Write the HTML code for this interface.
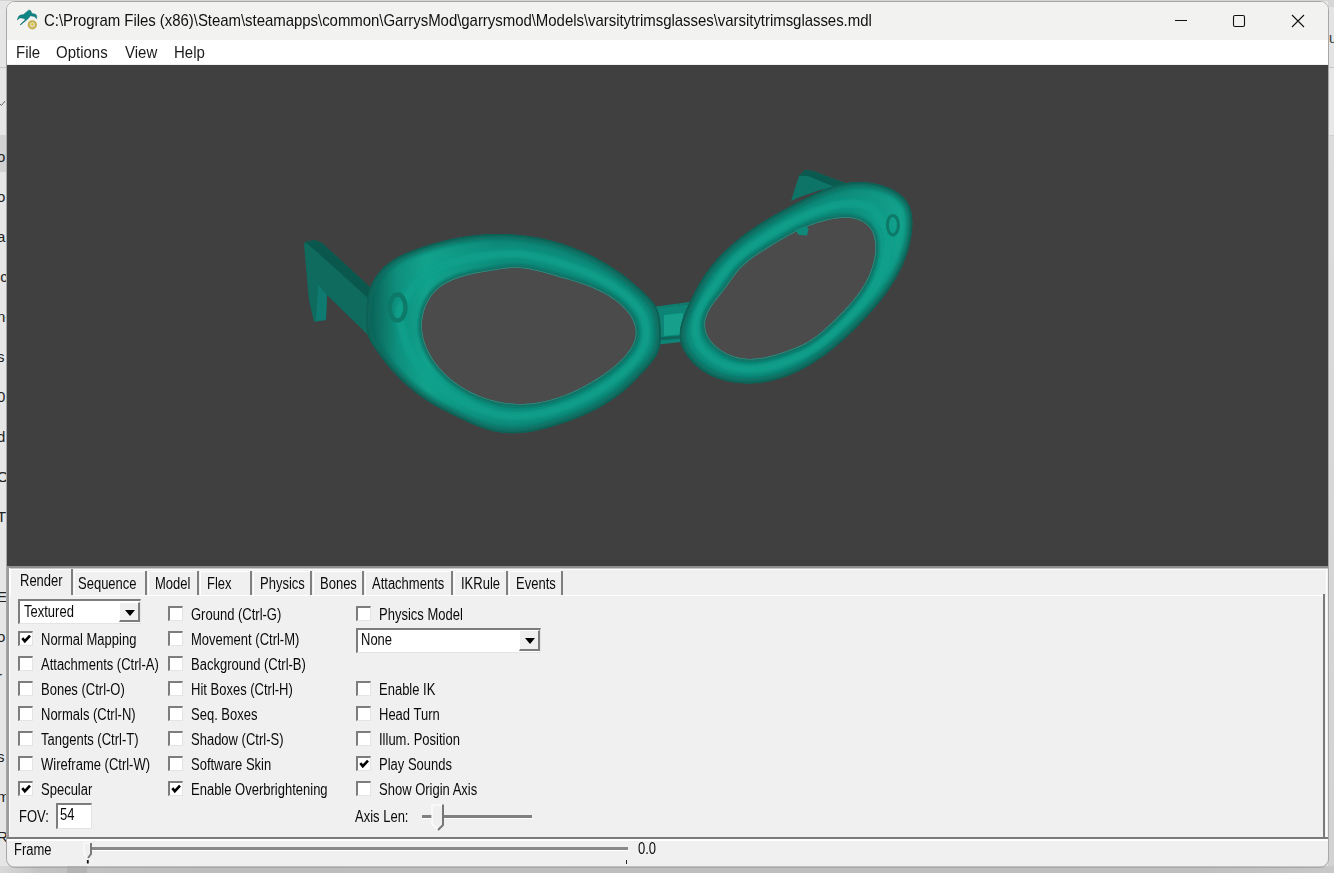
<!DOCTYPE html>
<html><head><meta charset="utf-8">
<style>
*{margin:0;padding:0;box-sizing:border-box}
html,body{width:1334px;height:873px;overflow:hidden;font-family:"Liberation Sans",sans-serif;position:relative}
.abs{position:absolute}
#bg{position:absolute;left:0;top:0;width:1334px;height:873px;background:#e6e6e6}
#win{position:absolute;left:0;top:0;width:1334px;height:873px;clip-path:inset(2px 6px 7px 7px round 8px);background:#f0f0f0}
#winborder{position:absolute;left:6px;top:1px;width:1323px;height:867px;border-radius:9px;border:1px solid #a8a8a8}
#title{position:absolute;left:0;top:0;width:1334px;height:40px;background:#f2f2f0}
#ttext{position:absolute;left:44px;top:13px;transform:scaleY(1.08);transform-origin:0 12.7px;font-size:15px;line-height:15px;color:#111;white-space:nowrap;letter-spacing:-0.05px}
#menu{position:absolute;left:0;top:40px;width:1334px;height:24px;background:#fff}
#menu span{position:absolute;top:45px;font-size:15px;line-height:15px;color:#111;transform:scaleY(1.08);transform-origin:0 13px}
#view{position:absolute;left:0;top:65px;width:1334px;height:501px;background:#404040}
.lbl{position:absolute;font-size:13px;line-height:13px;color:#0a0a0a;white-space:nowrap;transform:scaleY(1.28);transform-origin:0 11px}
.cb{position:absolute;width:15px;height:15px;background:#fff;border-top:2px solid #7d7d7d;border-left:2px solid #7d7d7d;border-right:1px solid #e4e4e4;border-bottom:1px solid #e4e4e4}
.cb .chk{position:absolute;left:-2px;top:-2px}
.tab{position:absolute;top:570px;height:26px;border-top:1px solid #fff;border-left:1px solid #fff;border-right:2px solid #8a8a8a;background:#f0f0f0}
.tab.sel{top:568px;height:28px}
.frag{position:absolute;left:-3px;font-size:15px;line-height:15px;color:#222;width:10px;overflow:hidden;white-space:nowrap}
.sunk{position:absolute;background:#fff;border-top:2px solid #7d7d7d;border-left:2px solid #7d7d7d;border-right:1px solid #e4e4e4;border-bottom:1px solid #e4e4e4}
.dd{position:absolute;width:21px;background:#f0f0f0;border-top:1px solid #fff;border-left:1px solid #fff;border-right:2px solid #7d7d7d;border-bottom:2px solid #7d7d7d}
.dd:after{content:"";position:absolute;left:4.5px;top:7px;border-left:5px solid transparent;border-right:5px solid transparent;border-top:6px solid #000}
</style></head><body>
<div id="bg"></div>
<div style="position:absolute;left:0;top:0;width:1334px;height:1px;background:#d4d4d4"></div>
<div style="position:absolute;left:1328px;top:0;width:6px;height:873px;background:linear-gradient(180deg,#d6d6d6 0,#d6d6d6 7px,#e4e4e4 7px,#e4e4e4 67px,#c8c8c8 67px,#c8c8c8 68px,#e8e8e8 68px,#e8e8e8 135px,#cfcfcf 135px,#cfcfcf 136px,#dcdcdc 136px,#d2d2d2 873px)"></div>
<div style="position:absolute;left:0;top:67px;width:7px;height:1px;background:#c8c8c8"></div>
<div style="position:absolute;left:1328px;top:67px;width:6px;height:1px;background:#c8c8c8"></div>
<div style="position:absolute;left:0;top:135px;width:7px;height:37px;background:#d2d2d2"></div>
<svg style="position:absolute;left:0;top:97px" width="7" height="10"><path d="M0,7 L1.5,8.5 L5,4" stroke="#666" stroke-width="1" fill="none"/></svg>
<div style="position:absolute;left:0;top:866px;width:1334px;height:7px;background:linear-gradient(90deg,#d8d8d8 0,#c2c2c2 40px,#bdbdbd 200px,#bfbfbf 1200px,#c8c8c8 1334px)"></div>
<div style="position:absolute;left:67px;top:866px;width:20px;height:7px;background:#b3b3b3"></div>
<div class="frag" style="top:149px">o</div>
<div class="frag" style="top:189px">o</div>
<div class="frag" style="top:229px">a</div>
<div class="frag" style="top:269px">lc</div>
<div class="frag" style="top:309px">n-</div>
<div class="frag" style="top:349px">s</div>
<div class="frag" style="top:389px">02</div>
<div class="frag" style="top:429px">d</div>
<div class="frag" style="top:469px">O</div>
<div class="frag" style="top:509px">TE</div>
<div class="frag" style="top:589px">E</div>
<div class="frag" style="top:629px">o</div>
<div class="frag" style="top:669px">r</div>
<div class="frag" style="top:749px">s</div>
<div class="frag" style="top:789px">m</div>
<div class="frag" style="top:829px">RE</div>
<div style="position:absolute;left:1329px;top:31px;font-size:14px;line-height:14px;color:#333">u</div>
<div id="winborder"></div>
<div id="win">
  <div id="title"></div>
  <svg class="abs" style="left:16px;top:9px" width="24" height="24" viewBox="0 0 24 24">
    <path d="M1.3,11.1 C2,8.5 3,6.8 4,6.3 L7.6,5.6 L12.6,1.2 L14.5,1.5 L15.9,4.5 L19.4,5.3 C20.5,6 21,7 20.5,9.7 C19.5,8 18.5,7.3 17.2,7.2 L14.5,6.7 L11.7,10 L5.1,15.5 L4,15.8 L9.5,10.5 L7.6,9.4 C6,8.8 4,8.9 3.5,8.9 Z" fill="#0f8584" stroke="#0d7272" stroke-width="0.6" stroke-linejoin="round"/>
    <circle cx="16.3" cy="15.8" r="4.6" fill="#c3ac4a"/>
    <circle cx="16.3" cy="15.8" r="2.8" fill="#ddd5a8"/>
    <circle cx="16.3" cy="15.2" r="1" fill="#e8c420"/>
  </svg>
  <div id="ttext">C:\Program Files (x86)\Steam\steamapps\common\GarrysMod\garrysmod\Models\varsitytrimsglasses\varsitytrimsglasses.mdl</div>
  <svg class="abs" style="left:1160px;top:0" width="168" height="40" viewBox="1160 0 168 40">
    <path d="M1175 20.5 H1187" stroke="#111" stroke-width="1.1"/>
    <rect x="1233.5" y="15.5" width="11" height="11" rx="1.5" fill="none" stroke="#111" stroke-width="1.1"/>
    <path d="M1292 15 L1304 27 M1304 15 L1292 27" stroke="#111" stroke-width="1.1"/>
  </svg>
  <div id="menu"></div>
  <div id="menuitems">
    <div class="lbl" style="left:16px;top:45px;font-size:15px;line-height:15px;color:#1a1a1a;transform:scaleY(1.08);transform-origin:0 13px">File</div>
    <div class="lbl" style="left:56px;top:45px;font-size:15px;line-height:15px;color:#1a1a1a;transform:scaleY(1.08);transform-origin:0 13px">Options</div>
    <div class="lbl" style="left:125px;top:45px;font-size:15px;line-height:15px;color:#1a1a1a;transform:scaleY(1.08);transform-origin:0 13px">View</div>
    <div class="lbl" style="left:174px;top:45px;font-size:15px;line-height:15px;color:#1a1a1a;transform:scaleY(1.08);transform-origin:0 13px">Help</div>
  </div>
  <div id="view"></div>
  <svg class="abs" style="left:0;top:0" width="1334" height="873" viewBox="0 0 1334 873"><defs><filter id="b3" x="-50%" y="-50%" width="200%" height="200%"><feGaussianBlur stdDeviation="2.5"/></filter><filter id="b2" x="-50%" y="-50%" width="200%" height="200%"><feGaussianBlur stdDeviation="1.5"/></filter><filter id="b1" x="-50%" y="-50%" width="200%" height="200%"><feGaussianBlur stdDeviation="0.6"/></filter><clipPath id="cL"><path d="M366.5,321.2 L366.4,317.9 L366.4,314.6 L366.4,311.3 L366.6,308.1 L366.8,304.9 L367.1,301.7 L367.5,298.5 L368.1,295.4 L368.9,292.3 L369.8,289.3 L370.8,286.2 L372.1,283.3 L373.6,280.4 L375.3,277.5 L377.3,274.7 L379.4,272.0 L381.6,269.5 L383.9,267.1 L386.4,264.9 L388.9,262.9 L391.5,261.1 L394.2,259.3 L396.9,257.7 L399.7,256.2 L402.5,254.8 L405.4,253.5 L408.4,252.2 L411.3,251.1 L414.3,249.9 L417.3,248.8 L420.4,247.7 L423.4,246.7 L426.5,245.7 L429.6,244.7 L432.7,243.8 L435.8,242.9 L438.9,242.0 L442.1,241.2 L445.2,240.4 L448.4,239.7 L451.6,239.0 L454.8,238.4 L458.0,237.8 L461.2,237.2 L464.5,236.7 L467.7,236.2 L470.9,235.8 L474.2,235.4 L477.4,235.1 L480.7,234.8 L483.9,234.5 L487.2,234.3 L490.4,234.2 L493.7,234.1 L496.9,234.0 L500.2,234.0 L503.4,234.1 L506.7,234.1 L509.9,234.3 L513.2,234.5 L516.4,234.7 L519.6,235.0 L522.8,235.4 L526.0,235.7 L529.2,236.2 L532.4,236.7 L535.6,237.2 L538.8,237.8 L541.9,238.4 L545.1,239.1 L548.2,239.9 L551.3,240.7 L554.4,241.5 L557.5,242.4 L560.6,243.3 L563.7,244.3 L566.7,245.3 L569.8,246.4 L572.8,247.5 L575.8,248.7 L578.8,249.9 L581.8,251.1 L584.7,252.4 L587.7,253.8 L590.6,255.2 L593.5,256.6 L596.3,258.1 L599.2,259.7 L602.0,261.3 L604.8,262.9 L607.6,264.6 L610.4,266.3 L613.1,268.1 L615.8,269.9 L618.5,271.7 L621.2,273.6 L623.8,275.6 L626.4,277.6 L629.0,279.6 L631.5,281.7 L634.0,283.7 L636.5,285.9 L638.9,288.0 L641.3,290.2 L643.7,292.5 L646.0,294.7 L648.3,297.0 L650.5,299.3 L652.5,301.7 L654.4,304.2 L656.1,306.8 L657.4,309.7 L658.5,312.7 L659.3,315.9 L659.8,319.2 L660.2,322.5 L660.5,325.9 L660.7,329.3 L660.9,332.6 L660.9,335.9 L660.8,339.1 L660.5,342.3 L660.0,345.4 L659.3,348.4 L658.3,351.3 L657.0,354.2 L655.4,356.9 L653.6,359.6 L651.6,362.2 L649.5,364.8 L647.3,367.3 L645.1,369.8 L642.9,372.2 L640.7,374.6 L638.4,377.0 L636.1,379.4 L633.8,381.7 L631.5,383.9 L629.1,386.2 L626.7,388.3 L624.3,390.4 L621.8,392.5 L619.3,394.5 L616.7,396.4 L614.1,398.3 L611.5,400.1 L608.8,401.9 L606.1,403.6 L603.4,405.3 L600.6,406.9 L597.8,408.4 L594.9,409.9 L592.0,411.3 L589.1,412.7 L586.2,414.1 L583.2,415.4 L580.2,416.7 L577.2,417.9 L574.2,419.1 L571.1,420.2 L568.0,421.4 L564.9,422.4 L561.8,423.5 L558.7,424.5 L555.5,425.5 L552.4,426.5 L549.2,427.4 L546.1,428.2 L542.9,429.1 L539.7,429.8 L536.5,430.5 L533.3,431.2 L530.1,431.7 L526.9,432.2 L523.7,432.6 L520.5,432.9 L517.3,433.1 L514.1,433.2 L510.9,433.2 L507.8,433.1 L504.6,432.9 L501.4,432.6 L498.3,432.1 L495.2,431.6 L492.0,430.9 L488.9,430.0 L485.8,429.1 L482.7,428.1 L479.7,427.0 L476.6,425.8 L473.6,424.5 L470.5,423.2 L467.5,421.9 L464.5,420.5 L461.6,419.1 L458.6,417.6 L455.6,416.2 L452.7,414.7 L449.8,413.3 L446.9,411.8 L444.0,410.3 L441.1,408.9 L438.3,407.3 L435.5,405.8 L432.7,404.2 L430.0,402.5 L427.3,400.8 L424.6,399.0 L421.9,397.2 L419.3,395.3 L416.7,393.4 L414.2,391.4 L411.7,389.3 L409.2,387.3 L406.8,385.1 L404.4,382.9 L402.0,380.7 L399.7,378.4 L397.4,376.1 L395.2,373.8 L393.0,371.4 L390.8,368.9 L388.7,366.4 L386.6,363.9 L384.6,361.4 L382.6,358.8 L380.6,356.2 L378.7,353.6 L376.8,351.0 L375.0,348.3 L373.2,345.6 L371.5,342.9 L370.0,340.1 L368.7,337.2 L367.8,334.2 L367.2,331.0 L366.8,327.8 L366.6,324.5 L366.5,321.2Z M422.0,321.5 L422.3,319.2 L422.6,316.9 L423.1,314.6 L423.6,312.3 L424.3,310.0 L425.1,307.8 L425.9,305.6 L426.9,303.4 L428.0,301.3 L429.1,299.3 L430.4,297.3 L431.7,295.4 L433.2,293.6 L434.7,291.9 L436.3,290.3 L438.0,288.7 L439.8,287.3 L441.6,286.0 L443.5,284.7 L445.5,283.5 L447.5,282.4 L449.6,281.4 L451.7,280.4 L453.8,279.5 L456.0,278.7 L458.1,277.9 L460.3,277.2 L462.5,276.5 L464.8,275.9 L467.0,275.3 L469.2,274.8 L471.5,274.2 L473.7,273.8 L476.0,273.3 L478.2,272.9 L480.5,272.5 L482.8,272.1 L485.1,271.7 L487.3,271.3 L489.6,270.9 L491.9,270.6 L494.2,270.2 L496.5,269.8 L498.7,269.5 L501.0,269.1 L503.3,268.8 L505.5,268.5 L507.8,268.2 L510.1,268.0 L512.4,267.9 L514.6,267.8 L516.9,267.9 L519.2,268.0 L521.5,268.1 L523.8,268.4 L526.1,268.7 L528.3,269.0 L530.6,269.4 L532.9,269.9 L535.2,270.4 L537.5,270.9 L539.7,271.5 L542.0,272.1 L544.2,272.7 L546.5,273.3 L548.7,274.0 L551.0,274.6 L553.2,275.3 L555.4,275.9 L557.6,276.5 L559.8,277.2 L562.0,277.8 L564.2,278.4 L566.4,279.0 L568.5,279.6 L570.7,280.3 L572.8,280.9 L575.0,281.6 L577.1,282.2 L579.2,282.9 L581.4,283.6 L583.5,284.4 L585.6,285.1 L587.7,285.9 L589.8,286.7 L591.9,287.6 L594.0,288.5 L596.1,289.4 L598.2,290.4 L600.3,291.4 L602.4,292.5 L604.5,293.6 L606.6,294.8 L608.7,296.1 L610.7,297.4 L612.7,298.7 L614.7,300.1 L616.7,301.6 L618.6,303.1 L620.5,304.6 L622.2,306.2 L623.9,307.9 L625.6,309.6 L627.1,311.4 L628.5,313.2 L629.9,315.0 L631.1,316.9 L632.2,318.9 L633.1,320.9 L633.9,322.9 L634.6,325.0 L635.1,327.2 L635.5,329.3 L635.7,331.5 L635.7,333.7 L635.5,335.9 L635.2,338.1 L634.6,340.3 L633.8,342.3 L632.9,344.4 L631.9,346.4 L630.7,348.4 L629.4,350.3 L628.0,352.1 L626.6,353.9 L625.1,355.7 L623.6,357.4 L622.0,359.1 L620.4,360.8 L618.7,362.4 L617.0,363.9 L615.3,365.4 L613.5,366.9 L611.7,368.4 L609.9,369.8 L608.0,371.2 L606.1,372.6 L604.2,373.9 L602.3,375.2 L600.3,376.5 L598.4,377.8 L596.4,379.1 L594.4,380.3 L592.4,381.5 L590.4,382.7 L588.4,383.8 L586.3,385.0 L584.3,386.1 L582.2,387.2 L580.2,388.2 L578.1,389.3 L576.0,390.3 L573.9,391.3 L571.8,392.2 L569.7,393.1 L567.5,394.0 L565.4,394.9 L563.2,395.7 L561.1,396.5 L558.9,397.2 L556.7,397.9 L554.6,398.6 L552.4,399.3 L550.2,399.9 L548.0,400.4 L545.7,401.0 L543.5,401.4 L541.3,401.9 L539.1,402.3 L536.8,402.7 L534.6,403.0 L532.3,403.3 L530.1,403.5 L527.8,403.7 L525.6,403.8 L523.3,403.9 L521.0,404.0 L518.7,403.9 L516.5,403.9 L514.2,403.8 L511.9,403.6 L509.6,403.4 L507.3,403.2 L505.0,402.9 L502.8,402.5 L500.5,402.1 L498.2,401.7 L496.0,401.2 L493.7,400.6 L491.5,400.0 L489.2,399.4 L487.0,398.7 L484.8,398.0 L482.6,397.2 L480.4,396.4 L478.2,395.5 L476.1,394.6 L474.0,393.6 L471.8,392.6 L469.8,391.6 L467.7,390.5 L465.7,389.4 L463.7,388.2 L461.7,387.0 L459.7,385.7 L457.8,384.4 L455.9,383.1 L454.0,381.7 L452.2,380.2 L450.4,378.8 L448.6,377.3 L446.9,375.7 L445.2,374.1 L443.6,372.5 L442.0,370.8 L440.4,369.1 L438.9,367.4 L437.4,365.6 L436.0,363.7 L434.6,361.9 L433.3,360.0 L432.0,358.1 L430.8,356.1 L429.7,354.1 L428.6,352.1 L427.6,350.0 L426.7,348.0 L425.8,345.9 L425.0,343.8 L424.3,341.6 L423.7,339.4 L423.1,337.3 L422.7,335.0 L422.3,332.8 L422.1,330.6 L421.9,328.3 L421.8,326.0 L421.9,323.8 L422.0,321.5Z" clip-rule="evenodd"/></clipPath><clipPath id="cR"><path d="M687.9,306.2 L689.1,303.6 L690.3,301.0 L691.5,298.5 L692.8,295.9 L694.0,293.4 L695.3,290.9 L696.6,288.4 L698.0,286.0 L699.4,283.6 L700.8,281.2 L702.3,278.9 L703.8,276.5 L705.3,274.3 L706.9,272.0 L708.5,269.8 L710.1,267.6 L711.8,265.4 L713.6,263.3 L715.4,261.2 L717.2,259.1 L719.1,257.1 L721.0,255.1 L722.9,253.1 L724.9,251.2 L726.9,249.2 L728.9,247.4 L731.0,245.5 L733.0,243.7 L735.2,241.9 L737.3,240.1 L739.5,238.4 L741.7,236.6 L743.9,234.9 L746.1,233.3 L748.4,231.6 L750.7,230.0 L753.0,228.4 L755.3,226.9 L757.6,225.3 L760.0,223.8 L762.3,222.3 L764.7,220.8 L767.1,219.4 L769.5,217.9 L771.9,216.5 L774.3,215.1 L776.7,213.7 L779.1,212.4 L781.6,211.0 L784.0,209.7 L786.4,208.4 L788.9,207.1 L791.4,205.8 L793.8,204.5 L796.3,203.2 L798.8,201.9 L801.2,200.6 L803.7,199.4 L806.2,198.1 L808.7,196.9 L811.1,195.6 L813.6,194.4 L816.1,193.2 L818.6,192.0 L821.1,190.9 L823.7,189.8 L826.2,188.8 L828.8,187.8 L831.4,186.9 L834.0,186.0 L836.6,185.2 L839.3,184.5 L842.0,183.9 L844.7,183.4 L847.5,182.9 L850.3,182.6 L853.1,182.3 L855.9,182.2 L858.7,182.1 L861.5,182.1 L864.4,182.2 L867.2,182.5 L870.0,182.8 L872.8,183.2 L875.6,183.7 L878.4,184.4 L881.1,185.1 L883.8,186.0 L886.5,186.9 L889.2,188.0 L891.8,189.2 L894.3,190.5 L896.7,191.9 L899.0,193.5 L901.1,195.2 L903.1,197.0 L904.9,198.9 L906.6,201.0 L908.0,203.2 L909.2,205.5 L910.1,208.0 L910.9,210.5 L911.5,213.2 L911.9,215.9 L912.2,218.7 L912.3,221.5 L912.3,224.4 L912.2,227.2 L912.0,230.1 L911.7,232.9 L911.3,235.7 L910.8,238.5 L910.3,241.3 L909.7,244.0 L909.0,246.8 L908.3,249.5 L907.5,252.1 L906.6,254.8 L905.6,257.4 L904.6,260.0 L903.6,262.6 L902.5,265.2 L901.3,267.7 L900.1,270.2 L898.9,272.6 L897.6,275.1 L896.2,277.5 L894.8,279.9 L893.4,282.3 L891.9,284.6 L890.4,286.9 L888.9,289.2 L887.3,291.5 L885.7,293.7 L884.0,296.0 L882.3,298.2 L880.6,300.4 L878.9,302.5 L877.1,304.7 L875.3,306.8 L873.5,308.9 L871.7,311.0 L869.9,313.1 L868.0,315.2 L866.1,317.3 L864.2,319.3 L862.3,321.3 L860.4,323.3 L858.5,325.3 L856.5,327.3 L854.6,329.3 L852.6,331.2 L850.6,333.1 L848.6,335.0 L846.6,336.9 L844.5,338.8 L842.5,340.7 L840.4,342.5 L838.3,344.3 L836.2,346.1 L834.1,347.9 L831.9,349.6 L829.7,351.3 L827.5,353.0 L825.3,354.7 L823.0,356.3 L820.7,357.9 L818.4,359.5 L816.1,361.0 L813.8,362.5 L811.4,364.0 L809.0,365.4 L806.6,366.8 L804.1,368.2 L801.7,369.4 L799.2,370.7 L796.7,371.9 L794.2,373.0 L791.6,374.2 L789.1,375.2 L786.5,376.2 L783.9,377.1 L781.2,378.0 L778.6,378.8 L775.9,379.6 L773.3,380.3 L770.6,380.9 L767.8,381.5 L765.1,382.0 L762.3,382.4 L759.6,382.8 L756.8,383.0 L754.0,383.2 L751.1,383.4 L748.3,383.4 L745.5,383.4 L742.7,383.3 L739.9,383.1 L737.1,382.9 L734.3,382.5 L731.5,382.1 L728.8,381.6 L726.1,380.9 L723.4,380.2 L720.7,379.5 L718.1,378.6 L715.5,377.6 L713.0,376.5 L710.5,375.4 L708.0,374.1 L705.6,372.7 L703.3,371.3 L701.0,369.7 L698.8,368.0 L696.6,366.3 L694.6,364.4 L692.6,362.4 L690.7,360.3 L688.8,358.1 L687.1,355.8 L685.6,353.5 L684.1,351.1 L682.9,348.6 L681.8,346.0 L681.0,343.5 L680.3,340.9 L679.9,338.2 L679.8,335.6 L679.8,332.9 L680.0,330.3 L680.4,327.6 L681.0,324.9 L681.7,322.2 L682.5,319.5 L683.5,316.8 L684.5,314.2 L685.6,311.5 L686.7,308.8 L687.9,306.2Z M705.2,321.5 L705.5,319.7 L706.0,317.8 L706.6,316.0 L707.2,314.2 L708.0,312.4 L708.9,310.7 L709.9,308.9 L710.9,307.2 L712.0,305.5 L713.2,303.8 L714.4,302.1 L715.7,300.5 L717.0,298.8 L718.3,297.2 L719.6,295.5 L720.9,293.9 L722.2,292.2 L723.4,290.6 L724.7,288.9 L725.9,287.3 L727.1,285.7 L728.3,284.0 L729.4,282.4 L730.5,280.8 L731.7,279.2 L732.8,277.6 L734.0,276.0 L735.2,274.5 L736.3,272.9 L737.6,271.4 L738.8,270.0 L740.1,268.6 L741.5,267.2 L742.9,265.8 L744.3,264.5 L745.8,263.2 L747.3,261.9 L748.8,260.7 L750.4,259.5 L752.0,258.3 L753.6,257.1 L755.3,256.0 L757.0,254.8 L758.6,253.7 L760.3,252.6 L762.0,251.5 L763.8,250.5 L765.5,249.4 L767.2,248.3 L768.9,247.2 L770.6,246.2 L772.3,245.1 L774.0,244.1 L775.8,243.0 L777.5,242.0 L779.2,241.0 L780.9,240.0 L782.6,239.0 L784.4,238.0 L786.1,237.0 L787.8,236.0 L789.6,235.1 L791.3,234.1 L793.1,233.2 L794.8,232.3 L796.6,231.4 L798.4,230.6 L800.2,229.7 L802.0,228.9 L803.8,228.1 L805.6,227.3 L807.4,226.6 L809.2,225.8 L811.1,225.1 L813.0,224.4 L814.8,223.8 L816.7,223.1 L818.6,222.5 L820.5,221.9 L822.4,221.4 L824.4,220.9 L826.3,220.4 L828.3,219.9 L830.3,219.5 L832.3,219.1 L834.3,218.8 L836.4,218.4 L838.4,218.2 L840.5,218.0 L842.5,217.8 L844.6,217.8 L846.6,217.8 L848.6,217.9 L850.7,218.0 L852.7,218.3 L854.6,218.8 L856.6,219.3 L858.5,219.9 L860.4,220.7 L862.1,221.6 L863.9,222.6 L865.5,223.7 L867.0,224.9 L868.3,226.2 L869.6,227.6 L870.7,229.1 L871.6,230.6 L872.5,232.3 L873.2,234.0 L873.8,235.8 L874.3,237.7 L874.7,239.6 L875.0,241.5 L875.2,243.5 L875.4,245.5 L875.4,247.6 L875.3,249.6 L875.2,251.7 L875.0,253.8 L874.7,255.8 L874.4,257.9 L874.0,259.9 L873.5,262.0 L873.0,264.0 L872.4,265.9 L871.8,267.9 L871.2,269.8 L870.5,271.7 L869.8,273.5 L869.0,275.4 L868.2,277.2 L867.3,279.0 L866.4,280.8 L865.5,282.5 L864.5,284.2 L863.5,285.9 L862.5,287.6 L861.4,289.3 L860.3,290.9 L859.2,292.5 L858.0,294.1 L856.8,295.7 L855.6,297.3 L854.4,298.8 L853.1,300.4 L851.8,301.9 L850.5,303.4 L849.2,304.9 L847.9,306.4 L846.5,307.8 L845.2,309.3 L843.8,310.8 L842.4,312.2 L841.0,313.6 L839.6,315.1 L838.2,316.5 L836.7,317.9 L835.3,319.3 L833.9,320.7 L832.4,322.1 L831.0,323.5 L829.5,324.8 L828.0,326.2 L826.6,327.6 L825.1,328.9 L823.6,330.2 L822.1,331.5 L820.6,332.8 L819.0,334.0 L817.4,335.2 L815.9,336.4 L814.3,337.6 L812.7,338.7 L811.0,339.8 L809.4,340.9 L807.7,341.9 L806.0,342.8 L804.2,343.8 L802.4,344.7 L800.7,345.5 L798.8,346.3 L797.0,347.1 L795.1,347.9 L793.3,348.6 L791.4,349.3 L789.5,350.0 L787.6,350.7 L785.7,351.4 L783.8,352.0 L781.8,352.7 L779.9,353.3 L778.0,353.9 L776.0,354.5 L774.1,355.1 L772.2,355.6 L770.2,356.1 L768.3,356.6 L766.3,357.0 L764.4,357.4 L762.4,357.8 L760.4,358.1 L758.5,358.3 L756.5,358.6 L754.6,358.7 L752.6,358.8 L750.7,358.9 L748.7,358.9 L746.8,358.8 L744.8,358.6 L742.9,358.4 L741.0,358.1 L739.0,357.8 L737.1,357.3 L735.2,356.8 L733.3,356.2 L731.4,355.5 L729.5,354.7 L727.6,353.9 L725.7,352.9 L723.9,351.9 L722.2,350.9 L720.4,349.7 L718.7,348.5 L717.1,347.2 L715.5,345.9 L714.0,344.5 L712.6,343.0 L711.3,341.5 L710.1,339.9 L709.0,338.2 L708.0,336.5 L707.1,334.8 L706.4,333.0 L705.9,331.1 L705.4,329.2 L705.2,327.3 L705.0,325.4 L705.1,323.4 L705.2,321.5Z" clip-rule="evenodd"/></clipPath><linearGradient id="gL" x1="368" y1="0" x2="660" y2="0" gradientUnits="userSpaceOnUse"><stop offset="0" stop-color="#0a5f54"/><stop offset="0.1" stop-color="#0f8f7e"/><stop offset="0.2" stop-color="#12a38d"/><stop offset="0.45" stop-color="#0e8a7a"/><stop offset="1" stop-color="#0e8878"/></linearGradient><linearGradient id="gR" x1="680" y1="0" x2="912" y2="0" gradientUnits="userSpaceOnUse"><stop offset="0" stop-color="#0e8a7a"/><stop offset="0.7" stop-color="#0e8a7a"/><stop offset="1" stop-color="#13a690"/></linearGradient></defs><path d="M791.0,201.0 L799.0,176.0 L805.0,170.0 L813.0,171.0 L849.0,184.5 L820.0,190.0 L800.0,197.0Z" fill="#0d7467"/><path d="M799,176 L805,170 L813,171 L849,184.5 L835,187 L808,176Z" fill="#0a5a50"/><path d="M305.0,242.0 L315.0,240.0 L322.0,243.0 L371.0,288.0 L369.0,336.0 L327.0,295.0 L326.0,320.0 L314.0,322.0 L309.0,300.0 L304.0,245.0Z" fill="#0e6b5e"/><path d="M305.0,242.0 L315.0,240.0 L322.0,243.0 L371.0,288.0 L369.0,299.0 L317.0,252.0Z" fill="#0a574d"/><path d="M318.0,285.0 L327.0,295.0 L326.0,320.0 L316.0,321.0Z" fill="#0f7a70"/><path d="M422.0,321.5 L422.3,319.2 L422.6,316.9 L423.1,314.6 L423.6,312.3 L424.3,310.0 L425.1,307.8 L425.9,305.6 L426.9,303.4 L428.0,301.3 L429.1,299.3 L430.4,297.3 L431.7,295.4 L433.2,293.6 L434.7,291.9 L436.3,290.3 L438.0,288.7 L439.8,287.3 L441.6,286.0 L443.5,284.7 L445.5,283.5 L447.5,282.4 L449.6,281.4 L451.7,280.4 L453.8,279.5 L456.0,278.7 L458.1,277.9 L460.3,277.2 L462.5,276.5 L464.8,275.9 L467.0,275.3 L469.2,274.8 L471.5,274.2 L473.7,273.8 L476.0,273.3 L478.2,272.9 L480.5,272.5 L482.8,272.1 L485.1,271.7 L487.3,271.3 L489.6,270.9 L491.9,270.6 L494.2,270.2 L496.5,269.8 L498.7,269.5 L501.0,269.1 L503.3,268.8 L505.5,268.5 L507.8,268.2 L510.1,268.0 L512.4,267.9 L514.6,267.8 L516.9,267.9 L519.2,268.0 L521.5,268.1 L523.8,268.4 L526.1,268.7 L528.3,269.0 L530.6,269.4 L532.9,269.9 L535.2,270.4 L537.5,270.9 L539.7,271.5 L542.0,272.1 L544.2,272.7 L546.5,273.3 L548.7,274.0 L551.0,274.6 L553.2,275.3 L555.4,275.9 L557.6,276.5 L559.8,277.2 L562.0,277.8 L564.2,278.4 L566.4,279.0 L568.5,279.6 L570.7,280.3 L572.8,280.9 L575.0,281.6 L577.1,282.2 L579.2,282.9 L581.4,283.6 L583.5,284.4 L585.6,285.1 L587.7,285.9 L589.8,286.7 L591.9,287.6 L594.0,288.5 L596.1,289.4 L598.2,290.4 L600.3,291.4 L602.4,292.5 L604.5,293.6 L606.6,294.8 L608.7,296.1 L610.7,297.4 L612.7,298.7 L614.7,300.1 L616.7,301.6 L618.6,303.1 L620.5,304.6 L622.2,306.2 L623.9,307.9 L625.6,309.6 L627.1,311.4 L628.5,313.2 L629.9,315.0 L631.1,316.9 L632.2,318.9 L633.1,320.9 L633.9,322.9 L634.6,325.0 L635.1,327.2 L635.5,329.3 L635.7,331.5 L635.7,333.7 L635.5,335.9 L635.2,338.1 L634.6,340.3 L633.8,342.3 L632.9,344.4 L631.9,346.4 L630.7,348.4 L629.4,350.3 L628.0,352.1 L626.6,353.9 L625.1,355.7 L623.6,357.4 L622.0,359.1 L620.4,360.8 L618.7,362.4 L617.0,363.9 L615.3,365.4 L613.5,366.9 L611.7,368.4 L609.9,369.8 L608.0,371.2 L606.1,372.6 L604.2,373.9 L602.3,375.2 L600.3,376.5 L598.4,377.8 L596.4,379.1 L594.4,380.3 L592.4,381.5 L590.4,382.7 L588.4,383.8 L586.3,385.0 L584.3,386.1 L582.2,387.2 L580.2,388.2 L578.1,389.3 L576.0,390.3 L573.9,391.3 L571.8,392.2 L569.7,393.1 L567.5,394.0 L565.4,394.9 L563.2,395.7 L561.1,396.5 L558.9,397.2 L556.7,397.9 L554.6,398.6 L552.4,399.3 L550.2,399.9 L548.0,400.4 L545.7,401.0 L543.5,401.4 L541.3,401.9 L539.1,402.3 L536.8,402.7 L534.6,403.0 L532.3,403.3 L530.1,403.5 L527.8,403.7 L525.6,403.8 L523.3,403.9 L521.0,404.0 L518.7,403.9 L516.5,403.9 L514.2,403.8 L511.9,403.6 L509.6,403.4 L507.3,403.2 L505.0,402.9 L502.8,402.5 L500.5,402.1 L498.2,401.7 L496.0,401.2 L493.7,400.6 L491.5,400.0 L489.2,399.4 L487.0,398.7 L484.8,398.0 L482.6,397.2 L480.4,396.4 L478.2,395.5 L476.1,394.6 L474.0,393.6 L471.8,392.6 L469.8,391.6 L467.7,390.5 L465.7,389.4 L463.7,388.2 L461.7,387.0 L459.7,385.7 L457.8,384.4 L455.9,383.1 L454.0,381.7 L452.2,380.2 L450.4,378.8 L448.6,377.3 L446.9,375.7 L445.2,374.1 L443.6,372.5 L442.0,370.8 L440.4,369.1 L438.9,367.4 L437.4,365.6 L436.0,363.7 L434.6,361.9 L433.3,360.0 L432.0,358.1 L430.8,356.1 L429.7,354.1 L428.6,352.1 L427.6,350.0 L426.7,348.0 L425.8,345.9 L425.0,343.8 L424.3,341.6 L423.7,339.4 L423.1,337.3 L422.7,335.0 L422.3,332.8 L422.1,330.6 L421.9,328.3 L421.8,326.0 L421.9,323.8 L422.0,321.5Z" fill="#4b4b4b"/><path d="M705.2,321.5 L705.5,319.7 L706.0,317.8 L706.6,316.0 L707.2,314.2 L708.0,312.4 L708.9,310.7 L709.9,308.9 L710.9,307.2 L712.0,305.5 L713.2,303.8 L714.4,302.1 L715.7,300.5 L717.0,298.8 L718.3,297.2 L719.6,295.5 L720.9,293.9 L722.2,292.2 L723.4,290.6 L724.7,288.9 L725.9,287.3 L727.1,285.7 L728.3,284.0 L729.4,282.4 L730.5,280.8 L731.7,279.2 L732.8,277.6 L734.0,276.0 L735.2,274.5 L736.3,272.9 L737.6,271.4 L738.8,270.0 L740.1,268.6 L741.5,267.2 L742.9,265.8 L744.3,264.5 L745.8,263.2 L747.3,261.9 L748.8,260.7 L750.4,259.5 L752.0,258.3 L753.6,257.1 L755.3,256.0 L757.0,254.8 L758.6,253.7 L760.3,252.6 L762.0,251.5 L763.8,250.5 L765.5,249.4 L767.2,248.3 L768.9,247.2 L770.6,246.2 L772.3,245.1 L774.0,244.1 L775.8,243.0 L777.5,242.0 L779.2,241.0 L780.9,240.0 L782.6,239.0 L784.4,238.0 L786.1,237.0 L787.8,236.0 L789.6,235.1 L791.3,234.1 L793.1,233.2 L794.8,232.3 L796.6,231.4 L798.4,230.6 L800.2,229.7 L802.0,228.9 L803.8,228.1 L805.6,227.3 L807.4,226.6 L809.2,225.8 L811.1,225.1 L813.0,224.4 L814.8,223.8 L816.7,223.1 L818.6,222.5 L820.5,221.9 L822.4,221.4 L824.4,220.9 L826.3,220.4 L828.3,219.9 L830.3,219.5 L832.3,219.1 L834.3,218.8 L836.4,218.4 L838.4,218.2 L840.5,218.0 L842.5,217.8 L844.6,217.8 L846.6,217.8 L848.6,217.9 L850.7,218.0 L852.7,218.3 L854.6,218.8 L856.6,219.3 L858.5,219.9 L860.4,220.7 L862.1,221.6 L863.9,222.6 L865.5,223.7 L867.0,224.9 L868.3,226.2 L869.6,227.6 L870.7,229.1 L871.6,230.6 L872.5,232.3 L873.2,234.0 L873.8,235.8 L874.3,237.7 L874.7,239.6 L875.0,241.5 L875.2,243.5 L875.4,245.5 L875.4,247.6 L875.3,249.6 L875.2,251.7 L875.0,253.8 L874.7,255.8 L874.4,257.9 L874.0,259.9 L873.5,262.0 L873.0,264.0 L872.4,265.9 L871.8,267.9 L871.2,269.8 L870.5,271.7 L869.8,273.5 L869.0,275.4 L868.2,277.2 L867.3,279.0 L866.4,280.8 L865.5,282.5 L864.5,284.2 L863.5,285.9 L862.5,287.6 L861.4,289.3 L860.3,290.9 L859.2,292.5 L858.0,294.1 L856.8,295.7 L855.6,297.3 L854.4,298.8 L853.1,300.4 L851.8,301.9 L850.5,303.4 L849.2,304.9 L847.9,306.4 L846.5,307.8 L845.2,309.3 L843.8,310.8 L842.4,312.2 L841.0,313.6 L839.6,315.1 L838.2,316.5 L836.7,317.9 L835.3,319.3 L833.9,320.7 L832.4,322.1 L831.0,323.5 L829.5,324.8 L828.0,326.2 L826.6,327.6 L825.1,328.9 L823.6,330.2 L822.1,331.5 L820.6,332.8 L819.0,334.0 L817.4,335.2 L815.9,336.4 L814.3,337.6 L812.7,338.7 L811.0,339.8 L809.4,340.9 L807.7,341.9 L806.0,342.8 L804.2,343.8 L802.4,344.7 L800.7,345.5 L798.8,346.3 L797.0,347.1 L795.1,347.9 L793.3,348.6 L791.4,349.3 L789.5,350.0 L787.6,350.7 L785.7,351.4 L783.8,352.0 L781.8,352.7 L779.9,353.3 L778.0,353.9 L776.0,354.5 L774.1,355.1 L772.2,355.6 L770.2,356.1 L768.3,356.6 L766.3,357.0 L764.4,357.4 L762.4,357.8 L760.4,358.1 L758.5,358.3 L756.5,358.6 L754.6,358.7 L752.6,358.8 L750.7,358.9 L748.7,358.9 L746.8,358.8 L744.8,358.6 L742.9,358.4 L741.0,358.1 L739.0,357.8 L737.1,357.3 L735.2,356.8 L733.3,356.2 L731.4,355.5 L729.5,354.7 L727.6,353.9 L725.7,352.9 L723.9,351.9 L722.2,350.9 L720.4,349.7 L718.7,348.5 L717.1,347.2 L715.5,345.9 L714.0,344.5 L712.6,343.0 L711.3,341.5 L710.1,339.9 L709.0,338.2 L708.0,336.5 L707.1,334.8 L706.4,333.0 L705.9,331.1 L705.4,329.2 L705.2,327.3 L705.0,325.4 L705.1,323.4 L705.2,321.5Z" fill="#4b4b4b"/><g><path d="M648,309 L690,304 L694,341 L681,342 L658,344.5 L648,345Z" fill="#0e8476"/><path d="M664,315 L683,313 L683,334 L664,336Z" fill="#12a08b" filter="url(#b1)"/><path d="M656,339 L690,336.5" stroke="#0b665a" stroke-width="3" filter="url(#b1)"/><path d="M656,307.5 L690,303" stroke="#0e7d6f" stroke-width="2" filter="url(#b1)"/></g><g clip-path="url(#cL)"><path d="M366.5,321.2 L366.4,317.9 L366.4,314.6 L366.4,311.3 L366.6,308.1 L366.8,304.9 L367.1,301.7 L367.5,298.5 L368.1,295.4 L368.9,292.3 L369.8,289.3 L370.8,286.2 L372.1,283.3 L373.6,280.4 L375.3,277.5 L377.3,274.7 L379.4,272.0 L381.6,269.5 L383.9,267.1 L386.4,264.9 L388.9,262.9 L391.5,261.1 L394.2,259.3 L396.9,257.7 L399.7,256.2 L402.5,254.8 L405.4,253.5 L408.4,252.2 L411.3,251.1 L414.3,249.9 L417.3,248.8 L420.4,247.7 L423.4,246.7 L426.5,245.7 L429.6,244.7 L432.7,243.8 L435.8,242.9 L438.9,242.0 L442.1,241.2 L445.2,240.4 L448.4,239.7 L451.6,239.0 L454.8,238.4 L458.0,237.8 L461.2,237.2 L464.5,236.7 L467.7,236.2 L470.9,235.8 L474.2,235.4 L477.4,235.1 L480.7,234.8 L483.9,234.5 L487.2,234.3 L490.4,234.2 L493.7,234.1 L496.9,234.0 L500.2,234.0 L503.4,234.1 L506.7,234.1 L509.9,234.3 L513.2,234.5 L516.4,234.7 L519.6,235.0 L522.8,235.4 L526.0,235.7 L529.2,236.2 L532.4,236.7 L535.6,237.2 L538.8,237.8 L541.9,238.4 L545.1,239.1 L548.2,239.9 L551.3,240.7 L554.4,241.5 L557.5,242.4 L560.6,243.3 L563.7,244.3 L566.7,245.3 L569.8,246.4 L572.8,247.5 L575.8,248.7 L578.8,249.9 L581.8,251.1 L584.7,252.4 L587.7,253.8 L590.6,255.2 L593.5,256.6 L596.3,258.1 L599.2,259.7 L602.0,261.3 L604.8,262.9 L607.6,264.6 L610.4,266.3 L613.1,268.1 L615.8,269.9 L618.5,271.7 L621.2,273.6 L623.8,275.6 L626.4,277.6 L629.0,279.6 L631.5,281.7 L634.0,283.7 L636.5,285.9 L638.9,288.0 L641.3,290.2 L643.7,292.5 L646.0,294.7 L648.3,297.0 L650.5,299.3 L652.5,301.7 L654.4,304.2 L656.1,306.8 L657.4,309.7 L658.5,312.7 L659.3,315.9 L659.8,319.2 L660.2,322.5 L660.5,325.9 L660.7,329.3 L660.9,332.6 L660.9,335.9 L660.8,339.1 L660.5,342.3 L660.0,345.4 L659.3,348.4 L658.3,351.3 L657.0,354.2 L655.4,356.9 L653.6,359.6 L651.6,362.2 L649.5,364.8 L647.3,367.3 L645.1,369.8 L642.9,372.2 L640.7,374.6 L638.4,377.0 L636.1,379.4 L633.8,381.7 L631.5,383.9 L629.1,386.2 L626.7,388.3 L624.3,390.4 L621.8,392.5 L619.3,394.5 L616.7,396.4 L614.1,398.3 L611.5,400.1 L608.8,401.9 L606.1,403.6 L603.4,405.3 L600.6,406.9 L597.8,408.4 L594.9,409.9 L592.0,411.3 L589.1,412.7 L586.2,414.1 L583.2,415.4 L580.2,416.7 L577.2,417.9 L574.2,419.1 L571.1,420.2 L568.0,421.4 L564.9,422.4 L561.8,423.5 L558.7,424.5 L555.5,425.5 L552.4,426.5 L549.2,427.4 L546.1,428.2 L542.9,429.1 L539.7,429.8 L536.5,430.5 L533.3,431.2 L530.1,431.7 L526.9,432.2 L523.7,432.6 L520.5,432.9 L517.3,433.1 L514.1,433.2 L510.9,433.2 L507.8,433.1 L504.6,432.9 L501.4,432.6 L498.3,432.1 L495.2,431.6 L492.0,430.9 L488.9,430.0 L485.8,429.1 L482.7,428.1 L479.7,427.0 L476.6,425.8 L473.6,424.5 L470.5,423.2 L467.5,421.9 L464.5,420.5 L461.6,419.1 L458.6,417.6 L455.6,416.2 L452.7,414.7 L449.8,413.3 L446.9,411.8 L444.0,410.3 L441.1,408.9 L438.3,407.3 L435.5,405.8 L432.7,404.2 L430.0,402.5 L427.3,400.8 L424.6,399.0 L421.9,397.2 L419.3,395.3 L416.7,393.4 L414.2,391.4 L411.7,389.3 L409.2,387.3 L406.8,385.1 L404.4,382.9 L402.0,380.7 L399.7,378.4 L397.4,376.1 L395.2,373.8 L393.0,371.4 L390.8,368.9 L388.7,366.4 L386.6,363.9 L384.6,361.4 L382.6,358.8 L380.6,356.2 L378.7,353.6 L376.8,351.0 L375.0,348.3 L373.2,345.6 L371.5,342.9 L370.0,340.1 L368.7,337.2 L367.8,334.2 L367.2,331.0 L366.8,327.8 L366.6,324.5 L366.5,321.2Z" fill="url(#gL)"/><path d="M403.6,334.7 L403.3,332.7 L399.0,317.0 L399.3,314.0 L399.6,311.9 L400.1,308.1 L413.7,286.5 L415.6,284.5 L417.6,282.6 L419.7,280.7 L421.1,279.2 L422.6,277.8 L424.9,276.1 L426.5,274.8 L428.1,273.5 L429.8,272.3 L432.3,270.9 L434.1,269.8 L436.0,268.8 L438.6,267.6 L440.6,266.7 L443.3,265.6 L445.3,264.8 L447.3,264.0 L450.1,263.1 L452.2,262.5 L454.2,261.8 L457.1,261.1 L459.2,260.5 L462.1,259.8 L464.2,259.4 L466.3,258.9 L469.2,258.4 L471.4,258.0 L474.3,257.5 L476.4,257.2 L478.6,256.8 L481.5,256.4 L483.7,256.2 L486.6,255.8 L488.7,255.6 L491.7,255.3 L493.8,255.0 L496.0,254.8 L498.9,254.6 L501.1,254.4 L503.2,254.2 L506.2,254.1 L508.3,254.0 L511.2,253.9 L513.4,253.9 L515.5,253.9 L518.5,254.1 L520.6,254.3 L523.5,254.5 L525.7,254.8 L527.8,255.1 L530.7,255.6 L532.8,255.9 L535.7,256.5 L537.9,256.9 L540.8,257.6 L542.9,258.1 L545.0,258.6 L547.8,259.4 L549.9,260.0 L552.8,260.8 L554.9,261.4 L557.7,262.3 L559.8,262.9 L561.8,263.5 L564.6,264.4 L566.6,265.1 L569.4,266.0 L571.4,266.7 L573.4,267.4 L576.2,268.4 L578.2,269.1 L580.1,269.8 L582.8,270.9 L584.8,271.7 L586.8,272.5 L589.4,273.6 L591.4,274.5 L593.3,275.3 L595.9,276.6 L597.9,277.5 L599.8,278.5 L602.4,279.9 L604.3,280.9 L606.9,282.4 L608.8,283.5 L610.7,284.6 L613.2,286.3 L615.1,287.5 L616.9,288.7 L619.4,290.5 L621.2,291.9 L623.6,293.8 L625.3,295.2 L627.0,296.6 L629.3,298.6 L630.9,300.1 L633.0,302.2 L634.5,303.8 L635.9,305.4 L637.8,307.7 L639.1,309.3 L641.2,312.3 L644.0,318.5 L644.8,321.4 L645.4,324.3 L645.8,326.4 L646.0,328.5 L646.2,331.4 L646.3,333.5 L646.2,336.5 L645.8,339.3 L645.3,342.1 L643.3,347.8 L641.4,351.0 L640.3,352.8 L638.6,355.2 L637.3,357.0 L635.9,358.7 L634.0,361.0 L632.6,362.6 L631.1,364.2 L629.7,365.8 L627.6,368.0 L626.1,369.5 L624.5,371.0 L622.3,373.0 L620.7,374.4 L618.5,376.4 L616.8,377.7 L615.1,379.1 L612.8,380.9 L611.0,382.2 L608.6,384.0 L606.8,385.2 L604.4,386.9 L602.6,388.0 L600.1,389.6 L598.2,390.8 L595.7,392.3 L593.8,393.3 L591.9,394.4 L589.3,395.8 L587.4,396.8 L584.7,398.1 L582.8,399.1 L580.8,400.0 L578.1,401.3 L576.2,402.1 L573.4,403.3 L571.4,404.1 L569.4,404.9 L567.4,405.7 L564.6,406.7 L562.6,407.4 L560.5,408.1 L557.7,409.0 L555.6,409.7 L553.6,410.3 L551.5,410.8 L548.6,411.6 L546.6,412.2 L544.5,412.6 L541.6,413.3 L539.5,413.7 L537.4,414.1 L534.5,414.6 L532.4,414.9 L530.2,415.2 L527.3,415.6 L525.2,415.7 L522.3,416.0 L520.1,416.0 L517.2,416.1 L514.3,416.2 L512.2,416.1 L509.2,415.9 L506.3,415.7 L503.4,415.3 L500.5,414.9 L497.6,414.3 L494.7,413.7 L492.6,413.2 L489.8,412.4 L487.7,411.8 L484.8,410.8 L482.8,410.2 L480.0,409.1 L477.9,408.3 L475.1,407.2 L473.1,406.3 L471.1,405.4 L469.2,404.5 L466.4,403.2 L464.5,402.2 L462.5,401.2 L460.6,400.2 L458.0,398.8 L456.1,397.7 L454.2,396.6 L452.4,395.5 L449.9,394.0 L448.1,392.8 L446.3,391.6 L443.8,389.9 L442.1,388.7 L439.7,386.9 L438.1,385.6 L435.8,383.7 L434.2,382.3 L431.9,380.4 L430.4,378.9 L428.3,376.9 L426.8,375.3 L424.7,373.2 L423.3,371.6 L422.0,369.9 L420.1,367.7 L418.8,366.0 L417.0,363.7 L415.8,361.9 L414.2,359.6 L413.1,357.8 L412.1,355.9 L410.6,353.5 L409.7,351.6 L408.8,349.7 L407.5,347.2 L406.8,345.2 L406.1,343.3 L405.5,341.3 L404.5,338.7 L404.0,336.7 L403.6,334.7Z" fill="none" stroke="#11a08b" stroke-width="8" filter="url(#b3)"/><path d="M366.5,321.2 L366.4,317.9 L366.4,314.6 L366.4,311.3 L366.6,308.1 L366.8,304.9 L367.1,301.7 L367.5,298.5 L368.1,295.4 L368.9,292.3 L369.8,289.3 L370.8,286.2 L372.1,283.3 L373.6,280.4 L375.3,277.5 L377.3,274.7 L379.4,272.0 L381.6,269.5 L383.9,267.1 L386.4,264.9 L388.9,262.9 L391.5,261.1 L394.2,259.3 L396.9,257.7 L399.7,256.2 L402.5,254.8 L405.4,253.5 L408.4,252.2 L411.3,251.1 L414.3,249.9 L417.3,248.8 L420.4,247.7 L423.4,246.7 L426.5,245.7 L429.6,244.7 L432.7,243.8 L435.8,242.9 L438.9,242.0 L442.1,241.2 L445.2,240.4 L448.4,239.7 L451.6,239.0 L454.8,238.4 L458.0,237.8 L461.2,237.2 L464.5,236.7 L467.7,236.2 L470.9,235.8 L474.2,235.4 L477.4,235.1 L480.7,234.8 L483.9,234.5 L487.2,234.3 L490.4,234.2 L493.7,234.1 L496.9,234.0 L500.2,234.0 L503.4,234.1 L506.7,234.1 L509.9,234.3 L513.2,234.5 L516.4,234.7 L519.6,235.0 L522.8,235.4 L526.0,235.7 L529.2,236.2 L532.4,236.7 L535.6,237.2 L538.8,237.8 L541.9,238.4 L545.1,239.1 L548.2,239.9 L551.3,240.7 L554.4,241.5 L557.5,242.4 L560.6,243.3 L563.7,244.3 L566.7,245.3 L569.8,246.4 L572.8,247.5 L575.8,248.7 L578.8,249.9 L581.8,251.1 L584.7,252.4 L587.7,253.8 L590.6,255.2 L593.5,256.6 L596.3,258.1 L599.2,259.7 L602.0,261.3 L604.8,262.9 L607.6,264.6 L610.4,266.3 L613.1,268.1 L615.8,269.9 L618.5,271.7 L621.2,273.6 L623.8,275.6 L626.4,277.6 L629.0,279.6 L631.5,281.7 L634.0,283.7 L636.5,285.9 L638.9,288.0 L641.3,290.2 L643.7,292.5 L646.0,294.7 L648.3,297.0 L650.5,299.3 L652.5,301.7 L654.4,304.2 L656.1,306.8 L657.4,309.7 L658.5,312.7 L659.3,315.9 L659.8,319.2 L660.2,322.5 L660.5,325.9 L660.7,329.3 L660.9,332.6 L660.9,335.9 L660.8,339.1 L660.5,342.3 L660.0,345.4 L659.3,348.4 L658.3,351.3 L657.0,354.2 L655.4,356.9 L653.6,359.6 L651.6,362.2 L649.5,364.8 L647.3,367.3 L645.1,369.8 L642.9,372.2 L640.7,374.6 L638.4,377.0 L636.1,379.4 L633.8,381.7 L631.5,383.9 L629.1,386.2 L626.7,388.3 L624.3,390.4 L621.8,392.5 L619.3,394.5 L616.7,396.4 L614.1,398.3 L611.5,400.1 L608.8,401.9 L606.1,403.6 L603.4,405.3 L600.6,406.9 L597.8,408.4 L594.9,409.9 L592.0,411.3 L589.1,412.7 L586.2,414.1 L583.2,415.4 L580.2,416.7 L577.2,417.9 L574.2,419.1 L571.1,420.2 L568.0,421.4 L564.9,422.4 L561.8,423.5 L558.7,424.5 L555.5,425.5 L552.4,426.5 L549.2,427.4 L546.1,428.2 L542.9,429.1 L539.7,429.8 L536.5,430.5 L533.3,431.2 L530.1,431.7 L526.9,432.2 L523.7,432.6 L520.5,432.9 L517.3,433.1 L514.1,433.2 L510.9,433.2 L507.8,433.1 L504.6,432.9 L501.4,432.6 L498.3,432.1 L495.2,431.6 L492.0,430.9 L488.9,430.0 L485.8,429.1 L482.7,428.1 L479.7,427.0 L476.6,425.8 L473.6,424.5 L470.5,423.2 L467.5,421.9 L464.5,420.5 L461.6,419.1 L458.6,417.6 L455.6,416.2 L452.7,414.7 L449.8,413.3 L446.9,411.8 L444.0,410.3 L441.1,408.9 L438.3,407.3 L435.5,405.8 L432.7,404.2 L430.0,402.5 L427.3,400.8 L424.6,399.0 L421.9,397.2 L419.3,395.3 L416.7,393.4 L414.2,391.4 L411.7,389.3 L409.2,387.3 L406.8,385.1 L404.4,382.9 L402.0,380.7 L399.7,378.4 L397.4,376.1 L395.2,373.8 L393.0,371.4 L390.8,368.9 L388.7,366.4 L386.6,363.9 L384.6,361.4 L382.6,358.8 L380.6,356.2 L378.7,353.6 L376.8,351.0 L375.0,348.3 L373.2,345.6 L371.5,342.9 L370.0,340.1 L368.7,337.2 L367.8,334.2 L367.2,331.0 L366.8,327.8 L366.6,324.5 L366.5,321.2Z" fill="none" stroke="#0b675b" stroke-width="10" filter="url(#b3)"/><path d="M366.5,321.2 L366.4,317.9 L366.4,314.6 L366.4,311.3 L366.6,308.1 L366.8,304.9 L367.1,301.7 L367.5,298.5 L368.1,295.4 L368.9,292.3 L369.8,289.3 L370.8,286.2 L372.1,283.3 L373.6,280.4 L375.3,277.5 L377.3,274.7 L379.4,272.0 L381.6,269.5 L383.9,267.1 L386.4,264.9 L388.9,262.9 L391.5,261.1 L394.2,259.3 L396.9,257.7 L399.7,256.2 L402.5,254.8 L405.4,253.5 L408.4,252.2 L411.3,251.1 L414.3,249.9 L417.3,248.8 L420.4,247.7 L423.4,246.7 L426.5,245.7 L429.6,244.7 L432.7,243.8 L435.8,242.9 L438.9,242.0 L442.1,241.2 L445.2,240.4 L448.4,239.7 L451.6,239.0 L454.8,238.4 L458.0,237.8 L461.2,237.2 L464.5,236.7 L467.7,236.2 L470.9,235.8 L474.2,235.4 L477.4,235.1 L480.7,234.8 L483.9,234.5 L487.2,234.3 L490.4,234.2 L493.7,234.1 L496.9,234.0 L500.2,234.0 L503.4,234.1 L506.7,234.1 L509.9,234.3 L513.2,234.5 L516.4,234.7 L519.6,235.0 L522.8,235.4 L526.0,235.7 L529.2,236.2 L532.4,236.7 L535.6,237.2 L538.8,237.8 L541.9,238.4 L545.1,239.1 L548.2,239.9 L551.3,240.7 L554.4,241.5 L557.5,242.4 L560.6,243.3 L563.7,244.3 L566.7,245.3 L569.8,246.4 L572.8,247.5 L575.8,248.7 L578.8,249.9 L581.8,251.1 L584.7,252.4 L587.7,253.8 L590.6,255.2 L593.5,256.6 L596.3,258.1 L599.2,259.7 L602.0,261.3 L604.8,262.9 L607.6,264.6 L610.4,266.3 L613.1,268.1 L615.8,269.9 L618.5,271.7 L621.2,273.6 L623.8,275.6 L626.4,277.6 L629.0,279.6 L631.5,281.7 L634.0,283.7 L636.5,285.9 L638.9,288.0 L641.3,290.2 L643.7,292.5 L646.0,294.7 L648.3,297.0 L650.5,299.3 L652.5,301.7 L654.4,304.2 L656.1,306.8 L657.4,309.7 L658.5,312.7 L659.3,315.9 L659.8,319.2 L660.2,322.5 L660.5,325.9 L660.7,329.3 L660.9,332.6 L660.9,335.9 L660.8,339.1 L660.5,342.3 L660.0,345.4 L659.3,348.4 L658.3,351.3 L657.0,354.2 L655.4,356.9 L653.6,359.6 L651.6,362.2 L649.5,364.8 L647.3,367.3 L645.1,369.8 L642.9,372.2 L640.7,374.6 L638.4,377.0 L636.1,379.4 L633.8,381.7 L631.5,383.9 L629.1,386.2 L626.7,388.3 L624.3,390.4 L621.8,392.5 L619.3,394.5 L616.7,396.4 L614.1,398.3 L611.5,400.1 L608.8,401.9 L606.1,403.6 L603.4,405.3 L600.6,406.9 L597.8,408.4 L594.9,409.9 L592.0,411.3 L589.1,412.7 L586.2,414.1 L583.2,415.4 L580.2,416.7 L577.2,417.9 L574.2,419.1 L571.1,420.2 L568.0,421.4 L564.9,422.4 L561.8,423.5 L558.7,424.5 L555.5,425.5 L552.4,426.5 L549.2,427.4 L546.1,428.2 L542.9,429.1 L539.7,429.8 L536.5,430.5 L533.3,431.2 L530.1,431.7 L526.9,432.2 L523.7,432.6 L520.5,432.9 L517.3,433.1 L514.1,433.2 L510.9,433.2 L507.8,433.1 L504.6,432.9 L501.4,432.6 L498.3,432.1 L495.2,431.6 L492.0,430.9 L488.9,430.0 L485.8,429.1 L482.7,428.1 L479.7,427.0 L476.6,425.8 L473.6,424.5 L470.5,423.2 L467.5,421.9 L464.5,420.5 L461.6,419.1 L458.6,417.6 L455.6,416.2 L452.7,414.7 L449.8,413.3 L446.9,411.8 L444.0,410.3 L441.1,408.9 L438.3,407.3 L435.5,405.8 L432.7,404.2 L430.0,402.5 L427.3,400.8 L424.6,399.0 L421.9,397.2 L419.3,395.3 L416.7,393.4 L414.2,391.4 L411.7,389.3 L409.2,387.3 L406.8,385.1 L404.4,382.9 L402.0,380.7 L399.7,378.4 L397.4,376.1 L395.2,373.8 L393.0,371.4 L390.8,368.9 L388.7,366.4 L386.6,363.9 L384.6,361.4 L382.6,358.8 L380.6,356.2 L378.7,353.6 L376.8,351.0 L375.0,348.3 L373.2,345.6 L371.5,342.9 L370.0,340.1 L368.7,337.2 L367.8,334.2 L367.2,331.0 L366.8,327.8 L366.6,324.5 L366.5,321.2Z" fill="none" stroke="#0a5e53" stroke-width="2.5" filter="url(#b1)"/><path d="M422.0,321.5 L422.3,319.2 L422.6,316.9 L423.1,314.6 L423.6,312.3 L424.3,310.0 L425.1,307.8 L425.9,305.6 L426.9,303.4 L428.0,301.3 L429.1,299.3 L430.4,297.3 L431.7,295.4 L433.2,293.6 L434.7,291.9 L436.3,290.3 L438.0,288.7 L439.8,287.3 L441.6,286.0 L443.5,284.7 L445.5,283.5 L447.5,282.4 L449.6,281.4 L451.7,280.4 L453.8,279.5 L456.0,278.7 L458.1,277.9 L460.3,277.2 L462.5,276.5 L464.8,275.9 L467.0,275.3 L469.2,274.8 L471.5,274.2 L473.7,273.8 L476.0,273.3 L478.2,272.9 L480.5,272.5 L482.8,272.1 L485.1,271.7 L487.3,271.3 L489.6,270.9 L491.9,270.6 L494.2,270.2 L496.5,269.8 L498.7,269.5 L501.0,269.1 L503.3,268.8 L505.5,268.5 L507.8,268.2 L510.1,268.0 L512.4,267.9 L514.6,267.8 L516.9,267.9 L519.2,268.0 L521.5,268.1 L523.8,268.4 L526.1,268.7 L528.3,269.0 L530.6,269.4 L532.9,269.9 L535.2,270.4 L537.5,270.9 L539.7,271.5 L542.0,272.1 L544.2,272.7 L546.5,273.3 L548.7,274.0 L551.0,274.6 L553.2,275.3 L555.4,275.9 L557.6,276.5 L559.8,277.2 L562.0,277.8 L564.2,278.4 L566.4,279.0 L568.5,279.6 L570.7,280.3 L572.8,280.9 L575.0,281.6 L577.1,282.2 L579.2,282.9 L581.4,283.6 L583.5,284.4 L585.6,285.1 L587.7,285.9 L589.8,286.7 L591.9,287.6 L594.0,288.5 L596.1,289.4 L598.2,290.4 L600.3,291.4 L602.4,292.5 L604.5,293.6 L606.6,294.8 L608.7,296.1 L610.7,297.4 L612.7,298.7 L614.7,300.1 L616.7,301.6 L618.6,303.1 L620.5,304.6 L622.2,306.2 L623.9,307.9 L625.6,309.6 L627.1,311.4 L628.5,313.2 L629.9,315.0 L631.1,316.9 L632.2,318.9 L633.1,320.9 L633.9,322.9 L634.6,325.0 L635.1,327.2 L635.5,329.3 L635.7,331.5 L635.7,333.7 L635.5,335.9 L635.2,338.1 L634.6,340.3 L633.8,342.3 L632.9,344.4 L631.9,346.4 L630.7,348.4 L629.4,350.3 L628.0,352.1 L626.6,353.9 L625.1,355.7 L623.6,357.4 L622.0,359.1 L620.4,360.8 L618.7,362.4 L617.0,363.9 L615.3,365.4 L613.5,366.9 L611.7,368.4 L609.9,369.8 L608.0,371.2 L606.1,372.6 L604.2,373.9 L602.3,375.2 L600.3,376.5 L598.4,377.8 L596.4,379.1 L594.4,380.3 L592.4,381.5 L590.4,382.7 L588.4,383.8 L586.3,385.0 L584.3,386.1 L582.2,387.2 L580.2,388.2 L578.1,389.3 L576.0,390.3 L573.9,391.3 L571.8,392.2 L569.7,393.1 L567.5,394.0 L565.4,394.9 L563.2,395.7 L561.1,396.5 L558.9,397.2 L556.7,397.9 L554.6,398.6 L552.4,399.3 L550.2,399.9 L548.0,400.4 L545.7,401.0 L543.5,401.4 L541.3,401.9 L539.1,402.3 L536.8,402.7 L534.6,403.0 L532.3,403.3 L530.1,403.5 L527.8,403.7 L525.6,403.8 L523.3,403.9 L521.0,404.0 L518.7,403.9 L516.5,403.9 L514.2,403.8 L511.9,403.6 L509.6,403.4 L507.3,403.2 L505.0,402.9 L502.8,402.5 L500.5,402.1 L498.2,401.7 L496.0,401.2 L493.7,400.6 L491.5,400.0 L489.2,399.4 L487.0,398.7 L484.8,398.0 L482.6,397.2 L480.4,396.4 L478.2,395.5 L476.1,394.6 L474.0,393.6 L471.8,392.6 L469.8,391.6 L467.7,390.5 L465.7,389.4 L463.7,388.2 L461.7,387.0 L459.7,385.7 L457.8,384.4 L455.9,383.1 L454.0,381.7 L452.2,380.2 L450.4,378.8 L448.6,377.3 L446.9,375.7 L445.2,374.1 L443.6,372.5 L442.0,370.8 L440.4,369.1 L438.9,367.4 L437.4,365.6 L436.0,363.7 L434.6,361.9 L433.3,360.0 L432.0,358.1 L430.8,356.1 L429.7,354.1 L428.6,352.1 L427.6,350.0 L426.7,348.0 L425.8,345.9 L425.0,343.8 L424.3,341.6 L423.7,339.4 L423.1,337.3 L422.7,335.0 L422.3,332.8 L422.1,330.6 L421.9,328.3 L421.8,326.0 L421.9,323.8 L422.0,321.5Z" fill="none" stroke="#0c7265" stroke-width="7" filter="url(#b2)"/><path d="M422.0,321.5 L422.3,319.2 L422.6,316.9 L423.1,314.6 L423.6,312.3 L424.3,310.0 L425.1,307.8 L425.9,305.6 L426.9,303.4 L428.0,301.3 L429.1,299.3 L430.4,297.3 L431.7,295.4 L433.2,293.6 L434.7,291.9 L436.3,290.3 L438.0,288.7 L439.8,287.3 L441.6,286.0 L443.5,284.7 L445.5,283.5 L447.5,282.4 L449.6,281.4 L451.7,280.4 L453.8,279.5 L456.0,278.7 L458.1,277.9 L460.3,277.2 L462.5,276.5 L464.8,275.9 L467.0,275.3 L469.2,274.8 L471.5,274.2 L473.7,273.8 L476.0,273.3 L478.2,272.9 L480.5,272.5 L482.8,272.1 L485.1,271.7 L487.3,271.3 L489.6,270.9 L491.9,270.6 L494.2,270.2 L496.5,269.8 L498.7,269.5 L501.0,269.1 L503.3,268.8 L505.5,268.5 L507.8,268.2 L510.1,268.0 L512.4,267.9 L514.6,267.8 L516.9,267.9 L519.2,268.0 L521.5,268.1 L523.8,268.4 L526.1,268.7 L528.3,269.0 L530.6,269.4 L532.9,269.9 L535.2,270.4 L537.5,270.9 L539.7,271.5 L542.0,272.1 L544.2,272.7 L546.5,273.3 L548.7,274.0 L551.0,274.6 L553.2,275.3 L555.4,275.9 L557.6,276.5 L559.8,277.2 L562.0,277.8 L564.2,278.4 L566.4,279.0 L568.5,279.6 L570.7,280.3 L572.8,280.9 L575.0,281.6 L577.1,282.2 L579.2,282.9 L581.4,283.6 L583.5,284.4 L585.6,285.1 L587.7,285.9 L589.8,286.7 L591.9,287.6 L594.0,288.5 L596.1,289.4 L598.2,290.4 L600.3,291.4 L602.4,292.5 L604.5,293.6 L606.6,294.8 L608.7,296.1 L610.7,297.4 L612.7,298.7 L614.7,300.1 L616.7,301.6 L618.6,303.1 L620.5,304.6 L622.2,306.2 L623.9,307.9 L625.6,309.6 L627.1,311.4 L628.5,313.2 L629.9,315.0 L631.1,316.9 L632.2,318.9 L633.1,320.9 L633.9,322.9 L634.6,325.0 L635.1,327.2 L635.5,329.3 L635.7,331.5 L635.7,333.7 L635.5,335.9 L635.2,338.1 L634.6,340.3 L633.8,342.3 L632.9,344.4 L631.9,346.4 L630.7,348.4 L629.4,350.3 L628.0,352.1 L626.6,353.9 L625.1,355.7 L623.6,357.4 L622.0,359.1 L620.4,360.8 L618.7,362.4 L617.0,363.9 L615.3,365.4 L613.5,366.9 L611.7,368.4 L609.9,369.8 L608.0,371.2 L606.1,372.6 L604.2,373.9 L602.3,375.2 L600.3,376.5 L598.4,377.8 L596.4,379.1 L594.4,380.3 L592.4,381.5 L590.4,382.7 L588.4,383.8 L586.3,385.0 L584.3,386.1 L582.2,387.2 L580.2,388.2 L578.1,389.3 L576.0,390.3 L573.9,391.3 L571.8,392.2 L569.7,393.1 L567.5,394.0 L565.4,394.9 L563.2,395.7 L561.1,396.5 L558.9,397.2 L556.7,397.9 L554.6,398.6 L552.4,399.3 L550.2,399.9 L548.0,400.4 L545.7,401.0 L543.5,401.4 L541.3,401.9 L539.1,402.3 L536.8,402.7 L534.6,403.0 L532.3,403.3 L530.1,403.5 L527.8,403.7 L525.6,403.8 L523.3,403.9 L521.0,404.0 L518.7,403.9 L516.5,403.9 L514.2,403.8 L511.9,403.6 L509.6,403.4 L507.3,403.2 L505.0,402.9 L502.8,402.5 L500.5,402.1 L498.2,401.7 L496.0,401.2 L493.7,400.6 L491.5,400.0 L489.2,399.4 L487.0,398.7 L484.8,398.0 L482.6,397.2 L480.4,396.4 L478.2,395.5 L476.1,394.6 L474.0,393.6 L471.8,392.6 L469.8,391.6 L467.7,390.5 L465.7,389.4 L463.7,388.2 L461.7,387.0 L459.7,385.7 L457.8,384.4 L455.9,383.1 L454.0,381.7 L452.2,380.2 L450.4,378.8 L448.6,377.3 L446.9,375.7 L445.2,374.1 L443.6,372.5 L442.0,370.8 L440.4,369.1 L438.9,367.4 L437.4,365.6 L436.0,363.7 L434.6,361.9 L433.3,360.0 L432.0,358.1 L430.8,356.1 L429.7,354.1 L428.6,352.1 L427.6,350.0 L426.7,348.0 L425.8,345.9 L425.0,343.8 L424.3,341.6 L423.7,339.4 L423.1,337.3 L422.7,335.0 L422.3,332.8 L422.1,330.6 L421.9,328.3 L421.8,326.0 L421.9,323.8 L422.0,321.5Z" fill="none" stroke="#6f9894" stroke-width="1.4" opacity="0.55"/></g><g clip-path="url(#cR)"><path d="M687.9,306.2 L689.1,303.6 L690.3,301.0 L691.5,298.5 L692.8,295.9 L694.0,293.4 L695.3,290.9 L696.6,288.4 L698.0,286.0 L699.4,283.6 L700.8,281.2 L702.3,278.9 L703.8,276.5 L705.3,274.3 L706.9,272.0 L708.5,269.8 L710.1,267.6 L711.8,265.4 L713.6,263.3 L715.4,261.2 L717.2,259.1 L719.1,257.1 L721.0,255.1 L722.9,253.1 L724.9,251.2 L726.9,249.2 L728.9,247.4 L731.0,245.5 L733.0,243.7 L735.2,241.9 L737.3,240.1 L739.5,238.4 L741.7,236.6 L743.9,234.9 L746.1,233.3 L748.4,231.6 L750.7,230.0 L753.0,228.4 L755.3,226.9 L757.6,225.3 L760.0,223.8 L762.3,222.3 L764.7,220.8 L767.1,219.4 L769.5,217.9 L771.9,216.5 L774.3,215.1 L776.7,213.7 L779.1,212.4 L781.6,211.0 L784.0,209.7 L786.4,208.4 L788.9,207.1 L791.4,205.8 L793.8,204.5 L796.3,203.2 L798.8,201.9 L801.2,200.6 L803.7,199.4 L806.2,198.1 L808.7,196.9 L811.1,195.6 L813.6,194.4 L816.1,193.2 L818.6,192.0 L821.1,190.9 L823.7,189.8 L826.2,188.8 L828.8,187.8 L831.4,186.9 L834.0,186.0 L836.6,185.2 L839.3,184.5 L842.0,183.9 L844.7,183.4 L847.5,182.9 L850.3,182.6 L853.1,182.3 L855.9,182.2 L858.7,182.1 L861.5,182.1 L864.4,182.2 L867.2,182.5 L870.0,182.8 L872.8,183.2 L875.6,183.7 L878.4,184.4 L881.1,185.1 L883.8,186.0 L886.5,186.9 L889.2,188.0 L891.8,189.2 L894.3,190.5 L896.7,191.9 L899.0,193.5 L901.1,195.2 L903.1,197.0 L904.9,198.9 L906.6,201.0 L908.0,203.2 L909.2,205.5 L910.1,208.0 L910.9,210.5 L911.5,213.2 L911.9,215.9 L912.2,218.7 L912.3,221.5 L912.3,224.4 L912.2,227.2 L912.0,230.1 L911.7,232.9 L911.3,235.7 L910.8,238.5 L910.3,241.3 L909.7,244.0 L909.0,246.8 L908.3,249.5 L907.5,252.1 L906.6,254.8 L905.6,257.4 L904.6,260.0 L903.6,262.6 L902.5,265.2 L901.3,267.7 L900.1,270.2 L898.9,272.6 L897.6,275.1 L896.2,277.5 L894.8,279.9 L893.4,282.3 L891.9,284.6 L890.4,286.9 L888.9,289.2 L887.3,291.5 L885.7,293.7 L884.0,296.0 L882.3,298.2 L880.6,300.4 L878.9,302.5 L877.1,304.7 L875.3,306.8 L873.5,308.9 L871.7,311.0 L869.9,313.1 L868.0,315.2 L866.1,317.3 L864.2,319.3 L862.3,321.3 L860.4,323.3 L858.5,325.3 L856.5,327.3 L854.6,329.3 L852.6,331.2 L850.6,333.1 L848.6,335.0 L846.6,336.9 L844.5,338.8 L842.5,340.7 L840.4,342.5 L838.3,344.3 L836.2,346.1 L834.1,347.9 L831.9,349.6 L829.7,351.3 L827.5,353.0 L825.3,354.7 L823.0,356.3 L820.7,357.9 L818.4,359.5 L816.1,361.0 L813.8,362.5 L811.4,364.0 L809.0,365.4 L806.6,366.8 L804.1,368.2 L801.7,369.4 L799.2,370.7 L796.7,371.9 L794.2,373.0 L791.6,374.2 L789.1,375.2 L786.5,376.2 L783.9,377.1 L781.2,378.0 L778.6,378.8 L775.9,379.6 L773.3,380.3 L770.6,380.9 L767.8,381.5 L765.1,382.0 L762.3,382.4 L759.6,382.8 L756.8,383.0 L754.0,383.2 L751.1,383.4 L748.3,383.4 L745.5,383.4 L742.7,383.3 L739.9,383.1 L737.1,382.9 L734.3,382.5 L731.5,382.1 L728.8,381.6 L726.1,380.9 L723.4,380.2 L720.7,379.5 L718.1,378.6 L715.5,377.6 L713.0,376.5 L710.5,375.4 L708.0,374.1 L705.6,372.7 L703.3,371.3 L701.0,369.7 L698.8,368.0 L696.6,366.3 L694.6,364.4 L692.6,362.4 L690.7,360.3 L688.8,358.1 L687.1,355.8 L685.6,353.5 L684.1,351.1 L682.9,348.6 L681.8,346.0 L681.0,343.5 L680.3,340.9 L679.9,338.2 L679.8,335.6 L679.8,332.9 L680.0,330.3 L680.4,327.6 L681.0,324.9 L681.7,322.2 L682.5,319.5 L683.5,316.8 L684.5,314.2 L685.6,311.5 L686.7,308.8 L687.9,306.2Z" fill="url(#gR)"/><path d="M696.8,317.8 L697.3,316.0 L697.8,314.3 L698.4,312.6 L699.1,310.8 L700.2,308.5 L701.0,306.8 L701.8,305.2 L702.8,303.5 L704.0,301.3 L705.0,299.7 L706.1,298.1 L707.5,295.8 L708.5,294.3 L710.0,292.1 L711.1,290.5 L712.2,289.0 L713.7,286.8 L714.8,285.3 L716.3,283.2 L717.4,281.6 L718.8,279.6 L719.9,278.1 L721.4,276.0 L722.5,274.5 L724.1,272.5 L725.2,271.1 L726.3,269.6 L727.9,267.7 L729.1,266.3 L730.7,264.4 L731.9,263.1 L733.2,261.8 L735.0,260.0 L736.3,258.7 L737.6,257.5 L739.5,255.8 L740.9,254.6 L742.3,253.4 L744.3,251.8 L745.8,250.7 L747.3,249.6 L749.3,248.0 L750.9,247.0 L752.4,245.9 L754.5,244.4 L756.1,243.4 L757.6,242.3 L759.8,240.9 L761.4,239.9 L762.9,238.9 L765.1,237.5 L766.7,236.5 L768.3,235.5 L770.4,234.1 L772.0,233.2 L773.6,232.2 L775.8,230.9 L777.4,229.9 L779.0,229.0 L780.6,228.1 L782.9,226.8 L784.5,225.9 L786.1,225.1 L787.7,224.2 L790.0,223.0 L791.6,222.1 L793.3,221.3 L794.9,220.5 L797.2,219.3 L798.9,218.6 L800.6,217.8 L802.2,217.0 L803.9,216.3 L806.2,215.2 L807.9,214.5 L809.6,213.8 L811.4,213.1 L813.7,212.1 L815.4,211.5 L817.2,210.8 L818.9,210.2 L821.3,209.3 L823.1,208.8 L824.9,208.2 L827.3,207.4 L829.1,206.9 L831.6,206.2 L833.4,205.8 L835.9,205.2 L838.4,204.6 L840.2,204.4 L842.7,204.0 L845.3,203.7 L847.8,203.6 L850.4,203.5 L852.9,203.5 L855.4,203.7 L858.0,204.0 L860.5,204.5 L862.9,205.0 L866.0,205.8 L868.4,206.6 L870.7,207.6 L872.8,208.7 L887.3,229.4 L887.7,231.6 L888.2,233.3 L888.4,235.6 L888.7,237.3 L888.9,239.0 L888.9,241.5 L888.7,244.0 L888.7,245.8 L888.4,248.2 L888.2,250.1 L887.8,252.6 L887.5,254.4 L886.8,256.9 L886.4,258.7 L885.7,261.2 L885.2,263.0 L884.3,265.5 L883.7,267.3 L882.8,269.6 L882.1,271.4 L881.0,273.7 L880.3,275.4 L879.1,277.7 L878.3,279.3 L877.5,281.0 L876.2,283.2 L875.3,284.8 L874.4,286.4 L873.0,288.5 L872.0,290.1 L871.0,291.6 L869.5,293.7 L868.5,295.2 L867.4,296.7 L866.3,298.1 L864.7,300.1 L863.6,301.6 L862.4,303.0 L860.8,305.0 L859.6,306.4 L858.3,307.8 L857.1,309.2 L855.4,311.1 L854.1,312.4 L852.9,313.8 L851.6,315.2 L849.8,317.0 L848.5,318.3 L847.2,319.7 L845.9,321.0 L844.1,322.8 L842.8,324.1 L841.4,325.4 L839.6,327.2 L838.3,328.4 L836.9,329.7 L835.0,331.4 L833.6,332.7 L832.3,333.9 L830.9,335.2 L828.9,336.8 L827.5,338.0 L826.1,339.2 L824.1,340.8 L822.7,341.9 L821.2,343.1 L819.2,344.6 L817.6,345.6 L816.1,346.7 L814.0,348.1 L812.5,349.1 L810.9,350.0 L808.7,351.4 L807.1,352.2 L805.4,353.1 L803.2,354.3 L801.5,355.1 L799.8,355.9 L797.5,357.0 L795.8,357.7 L793.5,358.8 L791.7,359.5 L790.0,360.1 L787.6,361.1 L785.8,361.7 L783.4,362.6 L781.7,363.2 L779.2,364.0 L777.4,364.6 L775.0,365.3 L773.2,365.8 L770.7,366.5 L768.9,366.9 L766.4,367.4 L764.6,367.7 L762.1,368.2 L759.5,368.5 L757.7,368.7 L755.2,369.0 L753.3,369.1 L750.8,369.2 L748.9,369.2 L746.4,369.1 L744.6,369.0 L742.0,368.8 L740.2,368.6 L737.7,368.2 L735.2,367.8 L733.3,367.4 L730.9,366.7 L728.4,366.0 L726.6,365.4 L724.2,364.5 L721.8,363.4 L719.5,362.3 L717.2,361.1 L715.0,359.8 L712.8,358.4 L710.1,356.5 L708.1,354.9 L706.2,353.1 L704.3,351.3 L702.1,348.8 L700.6,346.8 L698.8,344.0 L697.2,341.1 L695.6,334.9 L695.4,331.1 L695.4,328.7 L695.5,326.2 L695.5,324.5 L695.9,322.0 L696.2,320.2 L696.8,317.8Z" fill="none" stroke="#11a08b" stroke-width="8" filter="url(#b3)"/><path d="M687.9,306.2 L689.1,303.6 L690.3,301.0 L691.5,298.5 L692.8,295.9 L694.0,293.4 L695.3,290.9 L696.6,288.4 L698.0,286.0 L699.4,283.6 L700.8,281.2 L702.3,278.9 L703.8,276.5 L705.3,274.3 L706.9,272.0 L708.5,269.8 L710.1,267.6 L711.8,265.4 L713.6,263.3 L715.4,261.2 L717.2,259.1 L719.1,257.1 L721.0,255.1 L722.9,253.1 L724.9,251.2 L726.9,249.2 L728.9,247.4 L731.0,245.5 L733.0,243.7 L735.2,241.9 L737.3,240.1 L739.5,238.4 L741.7,236.6 L743.9,234.9 L746.1,233.3 L748.4,231.6 L750.7,230.0 L753.0,228.4 L755.3,226.9 L757.6,225.3 L760.0,223.8 L762.3,222.3 L764.7,220.8 L767.1,219.4 L769.5,217.9 L771.9,216.5 L774.3,215.1 L776.7,213.7 L779.1,212.4 L781.6,211.0 L784.0,209.7 L786.4,208.4 L788.9,207.1 L791.4,205.8 L793.8,204.5 L796.3,203.2 L798.8,201.9 L801.2,200.6 L803.7,199.4 L806.2,198.1 L808.7,196.9 L811.1,195.6 L813.6,194.4 L816.1,193.2 L818.6,192.0 L821.1,190.9 L823.7,189.8 L826.2,188.8 L828.8,187.8 L831.4,186.9 L834.0,186.0 L836.6,185.2 L839.3,184.5 L842.0,183.9 L844.7,183.4 L847.5,182.9 L850.3,182.6 L853.1,182.3 L855.9,182.2 L858.7,182.1 L861.5,182.1 L864.4,182.2 L867.2,182.5 L870.0,182.8 L872.8,183.2 L875.6,183.7 L878.4,184.4 L881.1,185.1 L883.8,186.0 L886.5,186.9 L889.2,188.0 L891.8,189.2 L894.3,190.5 L896.7,191.9 L899.0,193.5 L901.1,195.2 L903.1,197.0 L904.9,198.9 L906.6,201.0 L908.0,203.2 L909.2,205.5 L910.1,208.0 L910.9,210.5 L911.5,213.2 L911.9,215.9 L912.2,218.7 L912.3,221.5 L912.3,224.4 L912.2,227.2 L912.0,230.1 L911.7,232.9 L911.3,235.7 L910.8,238.5 L910.3,241.3 L909.7,244.0 L909.0,246.8 L908.3,249.5 L907.5,252.1 L906.6,254.8 L905.6,257.4 L904.6,260.0 L903.6,262.6 L902.5,265.2 L901.3,267.7 L900.1,270.2 L898.9,272.6 L897.6,275.1 L896.2,277.5 L894.8,279.9 L893.4,282.3 L891.9,284.6 L890.4,286.9 L888.9,289.2 L887.3,291.5 L885.7,293.7 L884.0,296.0 L882.3,298.2 L880.6,300.4 L878.9,302.5 L877.1,304.7 L875.3,306.8 L873.5,308.9 L871.7,311.0 L869.9,313.1 L868.0,315.2 L866.1,317.3 L864.2,319.3 L862.3,321.3 L860.4,323.3 L858.5,325.3 L856.5,327.3 L854.6,329.3 L852.6,331.2 L850.6,333.1 L848.6,335.0 L846.6,336.9 L844.5,338.8 L842.5,340.7 L840.4,342.5 L838.3,344.3 L836.2,346.1 L834.1,347.9 L831.9,349.6 L829.7,351.3 L827.5,353.0 L825.3,354.7 L823.0,356.3 L820.7,357.9 L818.4,359.5 L816.1,361.0 L813.8,362.5 L811.4,364.0 L809.0,365.4 L806.6,366.8 L804.1,368.2 L801.7,369.4 L799.2,370.7 L796.7,371.9 L794.2,373.0 L791.6,374.2 L789.1,375.2 L786.5,376.2 L783.9,377.1 L781.2,378.0 L778.6,378.8 L775.9,379.6 L773.3,380.3 L770.6,380.9 L767.8,381.5 L765.1,382.0 L762.3,382.4 L759.6,382.8 L756.8,383.0 L754.0,383.2 L751.1,383.4 L748.3,383.4 L745.5,383.4 L742.7,383.3 L739.9,383.1 L737.1,382.9 L734.3,382.5 L731.5,382.1 L728.8,381.6 L726.1,380.9 L723.4,380.2 L720.7,379.5 L718.1,378.6 L715.5,377.6 L713.0,376.5 L710.5,375.4 L708.0,374.1 L705.6,372.7 L703.3,371.3 L701.0,369.7 L698.8,368.0 L696.6,366.3 L694.6,364.4 L692.6,362.4 L690.7,360.3 L688.8,358.1 L687.1,355.8 L685.6,353.5 L684.1,351.1 L682.9,348.6 L681.8,346.0 L681.0,343.5 L680.3,340.9 L679.9,338.2 L679.8,335.6 L679.8,332.9 L680.0,330.3 L680.4,327.6 L681.0,324.9 L681.7,322.2 L682.5,319.5 L683.5,316.8 L684.5,314.2 L685.6,311.5 L686.7,308.8 L687.9,306.2Z" fill="none" stroke="#0b675b" stroke-width="10" filter="url(#b3)"/><path d="M687.9,306.2 L689.1,303.6 L690.3,301.0 L691.5,298.5 L692.8,295.9 L694.0,293.4 L695.3,290.9 L696.6,288.4 L698.0,286.0 L699.4,283.6 L700.8,281.2 L702.3,278.9 L703.8,276.5 L705.3,274.3 L706.9,272.0 L708.5,269.8 L710.1,267.6 L711.8,265.4 L713.6,263.3 L715.4,261.2 L717.2,259.1 L719.1,257.1 L721.0,255.1 L722.9,253.1 L724.9,251.2 L726.9,249.2 L728.9,247.4 L731.0,245.5 L733.0,243.7 L735.2,241.9 L737.3,240.1 L739.5,238.4 L741.7,236.6 L743.9,234.9 L746.1,233.3 L748.4,231.6 L750.7,230.0 L753.0,228.4 L755.3,226.9 L757.6,225.3 L760.0,223.8 L762.3,222.3 L764.7,220.8 L767.1,219.4 L769.5,217.9 L771.9,216.5 L774.3,215.1 L776.7,213.7 L779.1,212.4 L781.6,211.0 L784.0,209.7 L786.4,208.4 L788.9,207.1 L791.4,205.8 L793.8,204.5 L796.3,203.2 L798.8,201.9 L801.2,200.6 L803.7,199.4 L806.2,198.1 L808.7,196.9 L811.1,195.6 L813.6,194.4 L816.1,193.2 L818.6,192.0 L821.1,190.9 L823.7,189.8 L826.2,188.8 L828.8,187.8 L831.4,186.9 L834.0,186.0 L836.6,185.2 L839.3,184.5 L842.0,183.9 L844.7,183.4 L847.5,182.9 L850.3,182.6 L853.1,182.3 L855.9,182.2 L858.7,182.1 L861.5,182.1 L864.4,182.2 L867.2,182.5 L870.0,182.8 L872.8,183.2 L875.6,183.7 L878.4,184.4 L881.1,185.1 L883.8,186.0 L886.5,186.9 L889.2,188.0 L891.8,189.2 L894.3,190.5 L896.7,191.9 L899.0,193.5 L901.1,195.2 L903.1,197.0 L904.9,198.9 L906.6,201.0 L908.0,203.2 L909.2,205.5 L910.1,208.0 L910.9,210.5 L911.5,213.2 L911.9,215.9 L912.2,218.7 L912.3,221.5 L912.3,224.4 L912.2,227.2 L912.0,230.1 L911.7,232.9 L911.3,235.7 L910.8,238.5 L910.3,241.3 L909.7,244.0 L909.0,246.8 L908.3,249.5 L907.5,252.1 L906.6,254.8 L905.6,257.4 L904.6,260.0 L903.6,262.6 L902.5,265.2 L901.3,267.7 L900.1,270.2 L898.9,272.6 L897.6,275.1 L896.2,277.5 L894.8,279.9 L893.4,282.3 L891.9,284.6 L890.4,286.9 L888.9,289.2 L887.3,291.5 L885.7,293.7 L884.0,296.0 L882.3,298.2 L880.6,300.4 L878.9,302.5 L877.1,304.7 L875.3,306.8 L873.5,308.9 L871.7,311.0 L869.9,313.1 L868.0,315.2 L866.1,317.3 L864.2,319.3 L862.3,321.3 L860.4,323.3 L858.5,325.3 L856.5,327.3 L854.6,329.3 L852.6,331.2 L850.6,333.1 L848.6,335.0 L846.6,336.9 L844.5,338.8 L842.5,340.7 L840.4,342.5 L838.3,344.3 L836.2,346.1 L834.1,347.9 L831.9,349.6 L829.7,351.3 L827.5,353.0 L825.3,354.7 L823.0,356.3 L820.7,357.9 L818.4,359.5 L816.1,361.0 L813.8,362.5 L811.4,364.0 L809.0,365.4 L806.6,366.8 L804.1,368.2 L801.7,369.4 L799.2,370.7 L796.7,371.9 L794.2,373.0 L791.6,374.2 L789.1,375.2 L786.5,376.2 L783.9,377.1 L781.2,378.0 L778.6,378.8 L775.9,379.6 L773.3,380.3 L770.6,380.9 L767.8,381.5 L765.1,382.0 L762.3,382.4 L759.6,382.8 L756.8,383.0 L754.0,383.2 L751.1,383.4 L748.3,383.4 L745.5,383.4 L742.7,383.3 L739.9,383.1 L737.1,382.9 L734.3,382.5 L731.5,382.1 L728.8,381.6 L726.1,380.9 L723.4,380.2 L720.7,379.5 L718.1,378.6 L715.5,377.6 L713.0,376.5 L710.5,375.4 L708.0,374.1 L705.6,372.7 L703.3,371.3 L701.0,369.7 L698.8,368.0 L696.6,366.3 L694.6,364.4 L692.6,362.4 L690.7,360.3 L688.8,358.1 L687.1,355.8 L685.6,353.5 L684.1,351.1 L682.9,348.6 L681.8,346.0 L681.0,343.5 L680.3,340.9 L679.9,338.2 L679.8,335.6 L679.8,332.9 L680.0,330.3 L680.4,327.6 L681.0,324.9 L681.7,322.2 L682.5,319.5 L683.5,316.8 L684.5,314.2 L685.6,311.5 L686.7,308.8 L687.9,306.2Z" fill="none" stroke="#0a5e53" stroke-width="2.5" filter="url(#b1)"/><path d="M705.2,321.5 L705.5,319.7 L706.0,317.8 L706.6,316.0 L707.2,314.2 L708.0,312.4 L708.9,310.7 L709.9,308.9 L710.9,307.2 L712.0,305.5 L713.2,303.8 L714.4,302.1 L715.7,300.5 L717.0,298.8 L718.3,297.2 L719.6,295.5 L720.9,293.9 L722.2,292.2 L723.4,290.6 L724.7,288.9 L725.9,287.3 L727.1,285.7 L728.3,284.0 L729.4,282.4 L730.5,280.8 L731.7,279.2 L732.8,277.6 L734.0,276.0 L735.2,274.5 L736.3,272.9 L737.6,271.4 L738.8,270.0 L740.1,268.6 L741.5,267.2 L742.9,265.8 L744.3,264.5 L745.8,263.2 L747.3,261.9 L748.8,260.7 L750.4,259.5 L752.0,258.3 L753.6,257.1 L755.3,256.0 L757.0,254.8 L758.6,253.7 L760.3,252.6 L762.0,251.5 L763.8,250.5 L765.5,249.4 L767.2,248.3 L768.9,247.2 L770.6,246.2 L772.3,245.1 L774.0,244.1 L775.8,243.0 L777.5,242.0 L779.2,241.0 L780.9,240.0 L782.6,239.0 L784.4,238.0 L786.1,237.0 L787.8,236.0 L789.6,235.1 L791.3,234.1 L793.1,233.2 L794.8,232.3 L796.6,231.4 L798.4,230.6 L800.2,229.7 L802.0,228.9 L803.8,228.1 L805.6,227.3 L807.4,226.6 L809.2,225.8 L811.1,225.1 L813.0,224.4 L814.8,223.8 L816.7,223.1 L818.6,222.5 L820.5,221.9 L822.4,221.4 L824.4,220.9 L826.3,220.4 L828.3,219.9 L830.3,219.5 L832.3,219.1 L834.3,218.8 L836.4,218.4 L838.4,218.2 L840.5,218.0 L842.5,217.8 L844.6,217.8 L846.6,217.8 L848.6,217.9 L850.7,218.0 L852.7,218.3 L854.6,218.8 L856.6,219.3 L858.5,219.9 L860.4,220.7 L862.1,221.6 L863.9,222.6 L865.5,223.7 L867.0,224.9 L868.3,226.2 L869.6,227.6 L870.7,229.1 L871.6,230.6 L872.5,232.3 L873.2,234.0 L873.8,235.8 L874.3,237.7 L874.7,239.6 L875.0,241.5 L875.2,243.5 L875.4,245.5 L875.4,247.6 L875.3,249.6 L875.2,251.7 L875.0,253.8 L874.7,255.8 L874.4,257.9 L874.0,259.9 L873.5,262.0 L873.0,264.0 L872.4,265.9 L871.8,267.9 L871.2,269.8 L870.5,271.7 L869.8,273.5 L869.0,275.4 L868.2,277.2 L867.3,279.0 L866.4,280.8 L865.5,282.5 L864.5,284.2 L863.5,285.9 L862.5,287.6 L861.4,289.3 L860.3,290.9 L859.2,292.5 L858.0,294.1 L856.8,295.7 L855.6,297.3 L854.4,298.8 L853.1,300.4 L851.8,301.9 L850.5,303.4 L849.2,304.9 L847.9,306.4 L846.5,307.8 L845.2,309.3 L843.8,310.8 L842.4,312.2 L841.0,313.6 L839.6,315.1 L838.2,316.5 L836.7,317.9 L835.3,319.3 L833.9,320.7 L832.4,322.1 L831.0,323.5 L829.5,324.8 L828.0,326.2 L826.6,327.6 L825.1,328.9 L823.6,330.2 L822.1,331.5 L820.6,332.8 L819.0,334.0 L817.4,335.2 L815.9,336.4 L814.3,337.6 L812.7,338.7 L811.0,339.8 L809.4,340.9 L807.7,341.9 L806.0,342.8 L804.2,343.8 L802.4,344.7 L800.7,345.5 L798.8,346.3 L797.0,347.1 L795.1,347.9 L793.3,348.6 L791.4,349.3 L789.5,350.0 L787.6,350.7 L785.7,351.4 L783.8,352.0 L781.8,352.7 L779.9,353.3 L778.0,353.9 L776.0,354.5 L774.1,355.1 L772.2,355.6 L770.2,356.1 L768.3,356.6 L766.3,357.0 L764.4,357.4 L762.4,357.8 L760.4,358.1 L758.5,358.3 L756.5,358.6 L754.6,358.7 L752.6,358.8 L750.7,358.9 L748.7,358.9 L746.8,358.8 L744.8,358.6 L742.9,358.4 L741.0,358.1 L739.0,357.8 L737.1,357.3 L735.2,356.8 L733.3,356.2 L731.4,355.5 L729.5,354.7 L727.6,353.9 L725.7,352.9 L723.9,351.9 L722.2,350.9 L720.4,349.7 L718.7,348.5 L717.1,347.2 L715.5,345.9 L714.0,344.5 L712.6,343.0 L711.3,341.5 L710.1,339.9 L709.0,338.2 L708.0,336.5 L707.1,334.8 L706.4,333.0 L705.9,331.1 L705.4,329.2 L705.2,327.3 L705.0,325.4 L705.1,323.4 L705.2,321.5Z" fill="none" stroke="#0c7265" stroke-width="7" filter="url(#b2)"/><path d="M705.2,321.5 L705.5,319.7 L706.0,317.8 L706.6,316.0 L707.2,314.2 L708.0,312.4 L708.9,310.7 L709.9,308.9 L710.9,307.2 L712.0,305.5 L713.2,303.8 L714.4,302.1 L715.7,300.5 L717.0,298.8 L718.3,297.2 L719.6,295.5 L720.9,293.9 L722.2,292.2 L723.4,290.6 L724.7,288.9 L725.9,287.3 L727.1,285.7 L728.3,284.0 L729.4,282.4 L730.5,280.8 L731.7,279.2 L732.8,277.6 L734.0,276.0 L735.2,274.5 L736.3,272.9 L737.6,271.4 L738.8,270.0 L740.1,268.6 L741.5,267.2 L742.9,265.8 L744.3,264.5 L745.8,263.2 L747.3,261.9 L748.8,260.7 L750.4,259.5 L752.0,258.3 L753.6,257.1 L755.3,256.0 L757.0,254.8 L758.6,253.7 L760.3,252.6 L762.0,251.5 L763.8,250.5 L765.5,249.4 L767.2,248.3 L768.9,247.2 L770.6,246.2 L772.3,245.1 L774.0,244.1 L775.8,243.0 L777.5,242.0 L779.2,241.0 L780.9,240.0 L782.6,239.0 L784.4,238.0 L786.1,237.0 L787.8,236.0 L789.6,235.1 L791.3,234.1 L793.1,233.2 L794.8,232.3 L796.6,231.4 L798.4,230.6 L800.2,229.7 L802.0,228.9 L803.8,228.1 L805.6,227.3 L807.4,226.6 L809.2,225.8 L811.1,225.1 L813.0,224.4 L814.8,223.8 L816.7,223.1 L818.6,222.5 L820.5,221.9 L822.4,221.4 L824.4,220.9 L826.3,220.4 L828.3,219.9 L830.3,219.5 L832.3,219.1 L834.3,218.8 L836.4,218.4 L838.4,218.2 L840.5,218.0 L842.5,217.8 L844.6,217.8 L846.6,217.8 L848.6,217.9 L850.7,218.0 L852.7,218.3 L854.6,218.8 L856.6,219.3 L858.5,219.9 L860.4,220.7 L862.1,221.6 L863.9,222.6 L865.5,223.7 L867.0,224.9 L868.3,226.2 L869.6,227.6 L870.7,229.1 L871.6,230.6 L872.5,232.3 L873.2,234.0 L873.8,235.8 L874.3,237.7 L874.7,239.6 L875.0,241.5 L875.2,243.5 L875.4,245.5 L875.4,247.6 L875.3,249.6 L875.2,251.7 L875.0,253.8 L874.7,255.8 L874.4,257.9 L874.0,259.9 L873.5,262.0 L873.0,264.0 L872.4,265.9 L871.8,267.9 L871.2,269.8 L870.5,271.7 L869.8,273.5 L869.0,275.4 L868.2,277.2 L867.3,279.0 L866.4,280.8 L865.5,282.5 L864.5,284.2 L863.5,285.9 L862.5,287.6 L861.4,289.3 L860.3,290.9 L859.2,292.5 L858.0,294.1 L856.8,295.7 L855.6,297.3 L854.4,298.8 L853.1,300.4 L851.8,301.9 L850.5,303.4 L849.2,304.9 L847.9,306.4 L846.5,307.8 L845.2,309.3 L843.8,310.8 L842.4,312.2 L841.0,313.6 L839.6,315.1 L838.2,316.5 L836.7,317.9 L835.3,319.3 L833.9,320.7 L832.4,322.1 L831.0,323.5 L829.5,324.8 L828.0,326.2 L826.6,327.6 L825.1,328.9 L823.6,330.2 L822.1,331.5 L820.6,332.8 L819.0,334.0 L817.4,335.2 L815.9,336.4 L814.3,337.6 L812.7,338.7 L811.0,339.8 L809.4,340.9 L807.7,341.9 L806.0,342.8 L804.2,343.8 L802.4,344.7 L800.7,345.5 L798.8,346.3 L797.0,347.1 L795.1,347.9 L793.3,348.6 L791.4,349.3 L789.5,350.0 L787.6,350.7 L785.7,351.4 L783.8,352.0 L781.8,352.7 L779.9,353.3 L778.0,353.9 L776.0,354.5 L774.1,355.1 L772.2,355.6 L770.2,356.1 L768.3,356.6 L766.3,357.0 L764.4,357.4 L762.4,357.8 L760.4,358.1 L758.5,358.3 L756.5,358.6 L754.6,358.7 L752.6,358.8 L750.7,358.9 L748.7,358.9 L746.8,358.8 L744.8,358.6 L742.9,358.4 L741.0,358.1 L739.0,357.8 L737.1,357.3 L735.2,356.8 L733.3,356.2 L731.4,355.5 L729.5,354.7 L727.6,353.9 L725.7,352.9 L723.9,351.9 L722.2,350.9 L720.4,349.7 L718.7,348.5 L717.1,347.2 L715.5,345.9 L714.0,344.5 L712.6,343.0 L711.3,341.5 L710.1,339.9 L709.0,338.2 L708.0,336.5 L707.1,334.8 L706.4,333.0 L705.9,331.1 L705.4,329.2 L705.2,327.3 L705.0,325.4 L705.1,323.4 L705.2,321.5Z" fill="none" stroke="#6f9894" stroke-width="1.4" opacity="0.55"/></g><path d="M795.0,230.0 L806.0,226.0 L808.6,229.0 L807.0,235.6 L799.0,235.0Z" fill="#0f8a7a"/><ellipse cx="397.5" cy="307.5" rx="8" ry="13" fill="none" stroke="#0c7a69" stroke-width="4.5" filter="url(#b1)"/><ellipse cx="892.9" cy="225.1" rx="5.5" ry="9.7" fill="none" stroke="#0c7a69" stroke-width="3" filter="url(#b1)"/></svg>
  <!-- panel frame -->
  <div class="abs" style="left:7px;top:566px;width:1321px;height:2px;background:#8f8f8f"></div>
  <div class="abs" style="left:7px;top:568px;width:1321px;height:1px;background:#c8c8c8"></div>
  <div class="abs" style="left:9px;top:569px;width:1317px;height:1px;background:#ffffff"></div>
  <div class="abs" style="left:7px;top:566px;width:2px;height:272px;background:#9a9a9a"></div>
  <div class="abs" style="left:9px;top:568px;width:1px;height:268px;background:#ffffff"></div>
  <div class="abs" style="left:10px;top:569px;width:62px;height:1px;background:#fff"></div>
<div class="abs" style="left:10px;top:569px;width:1px;height:26px;background:#fff"></div>
<div class="abs" style="left:71px;top:569px;width:2px;height:26px;background:#7f7f7f"></div>
<div class="lbl" style="left:20px;top:574.7px">Render</div>
<div class="abs" style="left:74px;top:571px;width:72px;height:1px;background:#fff"></div>
<div class="abs" style="left:74px;top:571px;width:1px;height:24px;background:#fff"></div>
<div class="abs" style="left:145px;top:571px;width:2px;height:24px;background:#7f7f7f"></div>
<div class="lbl" style="left:78px;top:577.5px">Sequence</div>
<div class="abs" style="left:74px;top:595px;width:74px;height:1px;background:#fff"></div>
<div class="abs" style="left:148px;top:571px;width:50px;height:1px;background:#fff"></div>
<div class="abs" style="left:148px;top:571px;width:1px;height:24px;background:#fff"></div>
<div class="abs" style="left:197px;top:571px;width:2px;height:24px;background:#7f7f7f"></div>
<div class="lbl" style="left:155px;top:577.5px">Model</div>
<div class="abs" style="left:148px;top:595px;width:52px;height:1px;background:#fff"></div>
<div class="abs" style="left:200px;top:571px;width:51px;height:1px;background:#fff"></div>
<div class="abs" style="left:200px;top:571px;width:1px;height:24px;background:#fff"></div>
<div class="abs" style="left:250px;top:571px;width:2px;height:24px;background:#7f7f7f"></div>
<div class="lbl" style="left:207px;top:577.5px">Flex</div>
<div class="abs" style="left:200px;top:595px;width:53px;height:1px;background:#fff"></div>
<div class="abs" style="left:253px;top:571px;width:58px;height:1px;background:#fff"></div>
<div class="abs" style="left:253px;top:571px;width:1px;height:24px;background:#fff"></div>
<div class="abs" style="left:310px;top:571px;width:2px;height:24px;background:#7f7f7f"></div>
<div class="lbl" style="left:260px;top:577.5px">Physics</div>
<div class="abs" style="left:253px;top:595px;width:60px;height:1px;background:#fff"></div>
<div class="abs" style="left:313px;top:571px;width:50px;height:1px;background:#fff"></div>
<div class="abs" style="left:313px;top:571px;width:1px;height:24px;background:#fff"></div>
<div class="abs" style="left:362px;top:571px;width:2px;height:24px;background:#7f7f7f"></div>
<div class="lbl" style="left:320px;top:577.5px">Bones</div>
<div class="abs" style="left:313px;top:595px;width:52px;height:1px;background:#fff"></div>
<div class="abs" style="left:365px;top:571px;width:87px;height:1px;background:#fff"></div>
<div class="abs" style="left:365px;top:571px;width:1px;height:24px;background:#fff"></div>
<div class="abs" style="left:451px;top:571px;width:2px;height:24px;background:#7f7f7f"></div>
<div class="lbl" style="left:372px;top:577.5px">Attachments</div>
<div class="abs" style="left:365px;top:595px;width:89px;height:1px;background:#fff"></div>
<div class="abs" style="left:454px;top:571px;width:53px;height:1px;background:#fff"></div>
<div class="abs" style="left:454px;top:571px;width:1px;height:24px;background:#fff"></div>
<div class="abs" style="left:506px;top:571px;width:2px;height:24px;background:#7f7f7f"></div>
<div class="lbl" style="left:461px;top:577.5px">IKRule</div>
<div class="abs" style="left:454px;top:595px;width:55px;height:1px;background:#fff"></div>
<div class="abs" style="left:509px;top:571px;width:53px;height:1px;background:#fff"></div>
<div class="abs" style="left:509px;top:571px;width:1px;height:24px;background:#fff"></div>
<div class="abs" style="left:561px;top:571px;width:2px;height:24px;background:#7f7f7f"></div>
<div class="lbl" style="left:516px;top:577.5px">Events</div>
<div class="abs" style="left:509px;top:595px;width:55px;height:1px;background:#fff"></div>
<div class="abs" style="left:563px;top:595px;width:761px;height:1px;background:#fff"></div>
    <div class="abs" style="left:1323px;top:594px;width:2px;height:244px;background:#7a7a7a"></div>
  <div class="abs" style="left:1326px;top:569px;width:1px;height:270px;background:#ffffff"></div>
  <div class="abs" style="left:7px;top:836.5px;width:1321px;height:2px;background:#7a7a7a"></div>
  <div class="abs" style="left:7px;top:838.5px;width:1321px;height:2px;background:#ffffff"></div>
  <div class="cb" style="left:168px;top:606px"></div><div class="lbl" style="left:191px;top:609px">Ground (Ctrl-G)</div>
<div class="cb" style="left:356px;top:606px"></div><div class="lbl" style="left:379px;top:609px">Physics Model</div>
<div class="cb" style="left:18px;top:631px"><svg width="16" height="16" viewBox="0 0 16 16" class="chk"><path d="M4.3 7.2 L6.8 10.2 L12 4.6" fill="none" stroke="#000" stroke-width="2.6" stroke-linecap="butt"/></svg></div><div class="lbl" style="left:41px;top:634px">Normal Mapping</div>
<div class="cb" style="left:168px;top:631px"></div><div class="lbl" style="left:191px;top:634px">Movement (Ctrl-M)</div>
<div class="cb" style="left:18px;top:656px"></div><div class="lbl" style="left:41px;top:659px">Attachments (Ctrl-A)</div>
<div class="cb" style="left:168px;top:656px"></div><div class="lbl" style="left:191px;top:659px">Background (Ctrl-B)</div>
<div class="cb" style="left:18px;top:681px"></div><div class="lbl" style="left:41px;top:684px">Bones (Ctrl-O)</div>
<div class="cb" style="left:168px;top:681px"></div><div class="lbl" style="left:191px;top:684px">Hit Boxes (Ctrl-H)</div>
<div class="cb" style="left:356px;top:681px"></div><div class="lbl" style="left:379px;top:684px">Enable IK</div>
<div class="cb" style="left:18px;top:706px"></div><div class="lbl" style="left:41px;top:709px">Normals (Ctrl-N)</div>
<div class="cb" style="left:168px;top:706px"></div><div class="lbl" style="left:191px;top:709px">Seq. Boxes</div>
<div class="cb" style="left:356px;top:706px"></div><div class="lbl" style="left:379px;top:709px">Head Turn</div>
<div class="cb" style="left:18px;top:731px"></div><div class="lbl" style="left:41px;top:734px">Tangents (Ctrl-T)</div>
<div class="cb" style="left:168px;top:731px"></div><div class="lbl" style="left:191px;top:734px">Shadow (Ctrl-S)</div>
<div class="cb" style="left:356px;top:731px"></div><div class="lbl" style="left:379px;top:734px">Illum. Position</div>
<div class="cb" style="left:18px;top:756px"></div><div class="lbl" style="left:41px;top:759px">Wireframe (Ctrl-W)</div>
<div class="cb" style="left:168px;top:756px"></div><div class="lbl" style="left:191px;top:759px">Software Skin</div>
<div class="cb" style="left:356px;top:756px"><svg width="16" height="16" viewBox="0 0 16 16" class="chk"><path d="M4.3 7.2 L6.8 10.2 L12 4.6" fill="none" stroke="#000" stroke-width="2.6" stroke-linecap="butt"/></svg></div><div class="lbl" style="left:379px;top:759px">Play Sounds</div>
<div class="cb" style="left:18px;top:781px"><svg width="16" height="16" viewBox="0 0 16 16" class="chk"><path d="M4.3 7.2 L6.8 10.2 L12 4.6" fill="none" stroke="#000" stroke-width="2.6" stroke-linecap="butt"/></svg></div><div class="lbl" style="left:41px;top:784px">Specular</div>
<div class="cb" style="left:168px;top:781px"><svg width="16" height="16" viewBox="0 0 16 16" class="chk"><path d="M4.3 7.2 L6.8 10.2 L12 4.6" fill="none" stroke="#000" stroke-width="2.6" stroke-linecap="butt"/></svg></div><div class="lbl" style="left:191px;top:784px">Enable Overbrightening</div>
<div class="cb" style="left:356px;top:781px"></div><div class="lbl" style="left:379px;top:784px">Show Origin Axis</div>
  <!-- Textured combo -->
  <div class="sunk" style="left:18px;top:599px;width:123px;height:25px"></div>
  <div class="lbl" style="left:24px;top:606px">Textured</div>
  <div class="dd" style="left:119px;top:602px;height:20px"></div>
  <!-- None combo -->
  <div class="sunk" style="left:356px;top:628px;width:185px;height:25px"></div>
  <div class="lbl" style="left:361px;top:634px">None</div>
  <div class="dd" style="left:519px;top:630px;height:21px"></div>
  <!-- FOV -->
  <div class="lbl" style="left:19px;top:811px">FOV:</div>
  <div class="sunk" style="left:56px;top:803px;width:36px;height:26px"></div>
  <div class="lbl" style="left:60px;top:809px">54</div>
  <!-- Axis len -->
  <div class="lbl" style="left:355px;top:811px">Axis Len:</div>
  <div class="abs" style="left:422px;top:815px;width:110px;height:3px;background:#808080"></div>
  <div class="abs" style="left:422px;top:818px;width:111px;height:1px;background:#fff"></div>
  <svg class="abs" style="left:431px;top:804px" width="16" height="28" viewBox="0 0 16 28"><path d="M1,1 H12 V21 L7,25.5 L1,20Z" fill="#f0f0f0" stroke="#fff" stroke-width="1.2"/><path d="M12,0.5 V21 L7,26" fill="none" stroke="#777" stroke-width="2"/></svg>
  <!-- Frame bar -->
  <div class="lbl" style="left:14px;top:844px">Frame</div>
  <div class="abs" style="left:88px;top:847px;width:540px;height:3px;background:#8a8a8a"></div>
  <div class="abs" style="left:88px;top:850px;width:541px;height:1px;background:#fff"></div>
  <svg class="abs" style="left:83px;top:842px" width="12" height="22" viewBox="0 0 12 22"><path d="M1 1 H8 V12 L5 16 L1 12Z" fill="#f0f0f0" stroke="#fff" stroke-width="1"/><path d="M8 1 V12 L5 16" fill="none" stroke="#7a7a7a" stroke-width="2"/><path d="M4.8 18 V21.5" stroke="#111" stroke-width="1.8"/></svg>
  <div class="abs" style="left:625.5px;top:859.5px;width:1.5px;height:4px;background:#222"></div>
  <div class="lbl" style="left:638px;top:843px">0.0</div>
</div>
</body></html>
